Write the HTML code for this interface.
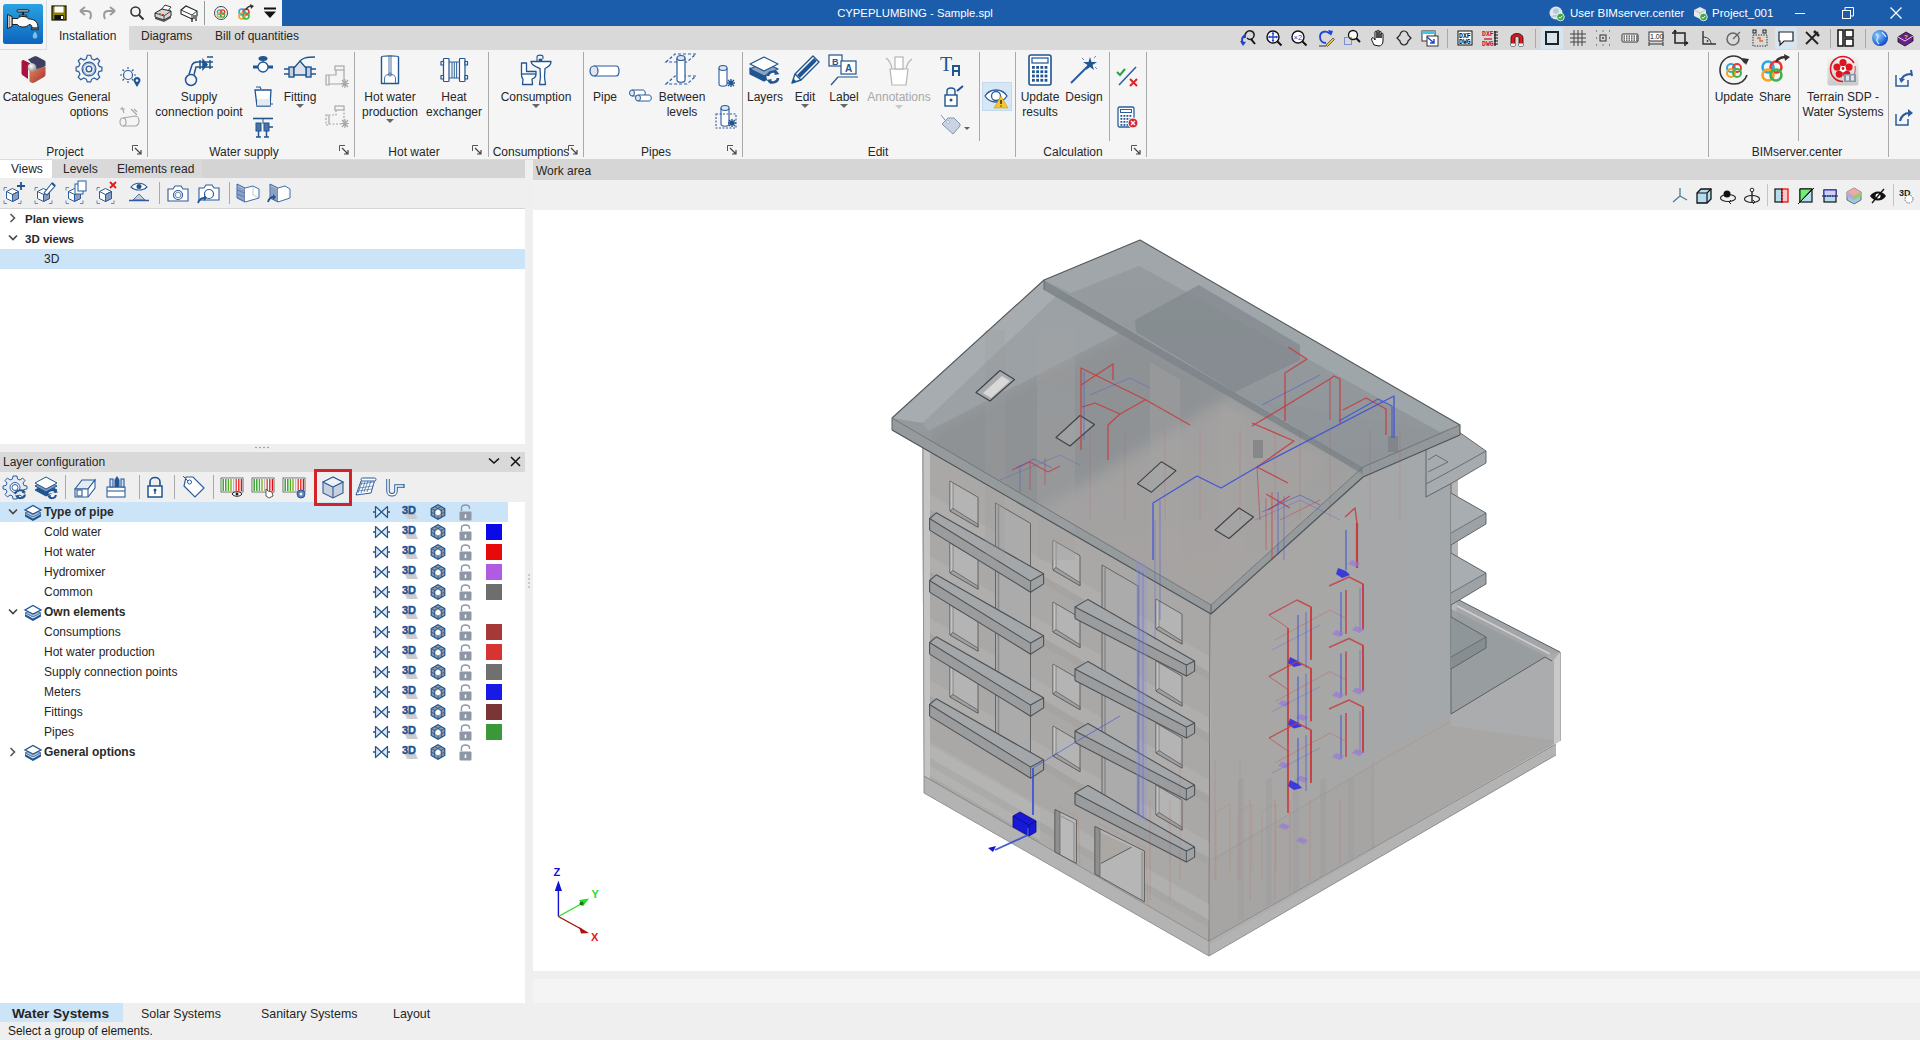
<!DOCTYPE html>
<html><head><meta charset="utf-8"><title>CYPEPLUMBING</title>
<style>
html,body{margin:0;padding:0;width:1920px;height:1040px;overflow:hidden;background:#ffffff;}
body{position:relative;font-family:"Liberation Sans", sans-serif;}
.t{position:absolute;white-space:nowrap;font-family:"Liberation Sans", sans-serif;}
.b{position:absolute;}
.s{position:absolute;overflow:visible;}
</style></head><body>
<div class="b" style="left:0px;top:0px;width:282px;height:26px;background:#f5f5f5;"></div>
<div class="b" style="left:282px;top:0px;width:1638px;height:26px;background:#1b5dab;"></div>
<div class="b" style="left:0px;top:0px;width:47px;height:50px;background:#f5f5f5;box-sizing:border-box;border-right:1px solid #dedede;border-bottom:1px solid #dedede;"></div>
<svg class="s" style="left:3px;top:4px;" width="40" height="40" viewBox="0 0 40 40"><defs><linearGradient id="ag" x1="0" y1="0" x2="0" y2="1"><stop offset="0" stop-color="#2aa2e2"/><stop offset="1" stop-color="#0d64be"/></linearGradient></defs>
<rect x="0" y="0" width="40" height="40" rx="2.5" fill="url(#ag)"/>
<rect x="14" y="5.8" width="12" height="2.2" rx="1.1" fill="#cfc9c6" stroke="#111" stroke-width="0.9"/>
<rect x="19.3" y="8" width="1.6" height="3" fill="#111"/>
<path d="M16.5 11 L23.5 11 L24 13 L16 13Z" fill="#8a8583" stroke="#111" stroke-width="0.6"/>
<path d="M9 14.5 L15 14.5 C16 12.5 18 12.5 20 12.5 C23 12.5 24.5 13.5 25.5 15 C31 15 35 17 35 24 L29 24 C29 21 27.5 20.5 26 20.5 C25 22 23 23 20 23 C17 23 15.5 22 14.5 20.5 L9 20.5 Z" fill="#fafafa" stroke="#111" stroke-width="0.9" stroke-linejoin="round"/>
<path d="M4.5 10.5 L9 12.5 L9 22.5 L4.5 24.5 Z" fill="#dedad8" stroke="#111" stroke-width="0.9"/>
<path d="M6.3 12 L6.3 23" stroke="#111" stroke-width="0.5"/>
<rect x="28.5" y="24" width="7" height="1.8" fill="#7a7573" stroke="#111" stroke-width="0.6"/>
<path d="M32 26.5 C30.5 29 29.3 30.5 29.3 32 C29.3 33.8 30.5 35 32 35 C33.5 35 34.7 33.8 34.7 32 C34.7 30.5 33.5 29 32 26.5Z" fill="#6cc4f0" stroke="#1a5a9a" stroke-width="0.6"/></svg>
<svg class="s" style="left:51px;top:5px;" width="16" height="16" viewBox="0 0 16 16"><rect x="1" y="1" width="14" height="14" fill="#8a8000" stroke="#111" stroke-width="1.2"/><rect x="3.5" y="1.5" width="9" height="6" fill="#fff"/><rect x="3.5" y="10" width="9" height="5" fill="#111"/><rect x="10" y="11" width="2" height="3" fill="#fff"/></svg>
<svg class="s" style="left:77px;top:5px;" width="16" height="16" viewBox="0 0 16 16"><path d="M3 6 L8 2 M3 6 L8 10 M3 6 L10 6 C14 6 15 10 13 14" fill="none" stroke="#9a9a9a" stroke-width="2"/></svg>
<svg class="s" style="left:102px;top:5px;" width="16" height="16" viewBox="0 0 16 16"><path d="M13 6 L8 2 M13 6 L8 10 M13 6 L6 6 C2 6 1 10 3 14" fill="none" stroke="#9a9a9a" stroke-width="2"/></svg>
<svg class="s" style="left:129px;top:5px;" width="16" height="16" viewBox="0 0 16 16"><circle cx="6.5" cy="6.5" r="4.5" fill="none" stroke="#333" stroke-width="1.6"/><path d="M10 10 L14.5 14.5" stroke="#333" stroke-width="2"/></svg>
<svg class="s" style="left:154px;top:4px;" width="18" height="18" viewBox="0 0 18 18"><path d="M7 6 L11 1 L17 3 L13 8Z" fill="#fff" stroke="#222" stroke-width="0.9"/><path d="M1 9 L8 5 L17 7 L17 12 L10 16 L1 13Z" fill="#d6d6d6" stroke="#222" stroke-width="1"/><path d="M1 9 L10 12 L17 7 M10 12 L10 16" fill="none" stroke="#222" stroke-width="0.8"/><path d="M1 13 L10 16 L17 12 L17 14 L10 18 L1 15Z" fill="#555"/><rect x="5" y="9" width="2" height="1.3" fill="#2c2"/><rect x="8" y="10" width="2" height="1.3" fill="#e22"/></svg>
<svg class="s" style="left:180px;top:4px;" width="18" height="18" viewBox="0 0 18 18"><path d="M1 6 L6 2 L17 7 L17 12 L12 15 L1 10Z" fill="#fff" stroke="#222" stroke-width="1.1"/><path d="M1 6 L12 11 L17 7 M12 11 L12 15" fill="none" stroke="#222" stroke-width="0.9"/><path d="M12 15 L12 18 M16 12 L16 17" stroke="#222" stroke-width="1.3"/><rect x="13" y="11" width="4" height="4" fill="#777"/><rect x="15" y="8" width="1.5" height="1" fill="#2c2"/></svg>
<div class="b" style="left:204px;top:1px;width:1px;height:24px;background:#9a9a9a;"></div>
<svg class="s" style="left:213px;top:5px;" width="16" height="16" viewBox="0 0 16 16"><circle cx="8" cy="8" r="6.5" fill="none" stroke="#444" stroke-width="1"/><circle cx="6.5" cy="7" r="2.2" fill="none" stroke="#2aa7e0" stroke-width="1.3"/><circle cx="9.5" cy="7" r="2.2" fill="none" stroke="#e33" stroke-width="1.3"/><circle cx="6.5" cy="10" r="2.2" fill="none" stroke="#f6a21c" stroke-width="1.3"/><circle cx="9.5" cy="10" r="2.2" fill="none" stroke="#3bb54a" stroke-width="1.3"/></svg>
<svg class="s" style="left:237px;top:4px;" width="18" height="17" viewBox="0 0 18 17"><circle cx="5" cy="8" r="3" fill="none" stroke="#2aa7e0" stroke-width="1.6"/><circle cx="9" cy="8" r="3" fill="none" stroke="#e33" stroke-width="1.6"/><circle cx="5" cy="12" r="3" fill="none" stroke="#f6a21c" stroke-width="1.6"/><circle cx="9" cy="12" r="3" fill="none" stroke="#3bb54a" stroke-width="1.6"/><path d="M9 6 C10 3 12 2 15 2" stroke="#333" stroke-width="1.5" fill="none"/><path d="M13 0 L17 2 L14 5Z" fill="#333"/></svg>
<svg class="s" style="left:263px;top:6px;" width="14" height="14" viewBox="0 0 14 14"><rect x="1" y="1.5" width="12" height="2" fill="#111"/><path d="M1 5.5 L13 5.5 L7 12Z" fill="#111"/></svg>
<div class="t" style="left:715px;width:400px;text-align:center;top:6.08px;font-size:11.3px;line-height:14px;font-weight:400;color:#ffffff;">CYPEPLUMBING - Sample.spl</div>
<svg class="s" style="left:1549px;top:5px;" width="16" height="16" viewBox="0 0 16 16"><circle cx="7" cy="8" r="6.5" fill="#dfe6ee"/><circle cx="7" cy="6" r="2.8" fill="#b9c7d6"/><path d="M2 12 C4 9 10 9 12 12" fill="#b9c7d6"/><circle cx="11.5" cy="12" r="3.8" fill="#3aa648" stroke="#fff" stroke-width="0.8"/><path d="M9.8 12 L11 13.3 L13.3 10.8" stroke="#fff" stroke-width="1" fill="none"/></svg>
<div class="t" style="left:1570px;top:6.02px;font-size:11.5px;line-height:14px;font-weight:400;color:#ffffff;">User BIMserver.center</div>
<svg class="s" style="left:1692px;top:5px;" width="16" height="16" viewBox="0 0 16 16"><path d="M2 5 L8 2 L14 5 L14 11 L8 14 L2 11Z" fill="#e8e8e8"/><path d="M2 5 L8 8 L14 5 M8 8 L8 14" stroke="#bbb" fill="none"/><circle cx="11.5" cy="12" r="3.8" fill="#3aa648" stroke="#fff" stroke-width="0.8"/><path d="M9.8 12 L11 13.3 L13.3 10.8" stroke="#fff" stroke-width="1" fill="none"/></svg>
<div class="t" style="left:1712px;top:6.02px;font-size:11.5px;line-height:14px;font-weight:400;color:#ffffff;">Project_001</div>
<div class="b" style="left:1795px;top:13px;width:10px;height:1px;background:#ffffff;"></div>
<svg class="s" style="left:1842px;top:7px;" width="12" height="12" viewBox="0 0 12 12"><rect x="0.5" y="3.5" width="8" height="8" fill="none" stroke="#fff"/><path d="M3 3.5 L3 0.5 L11.5 0.5 L11.5 9 L8.5 9" fill="none" stroke="#fff"/></svg>
<svg class="s" style="left:1890px;top:7px;" width="12" height="12" viewBox="0 0 12 12"><path d="M0.5 0.5 L11.5 11.5 M11.5 0.5 L0.5 11.5" stroke="#fff" stroke-width="1.3"/></svg>
<div class="b" style="left:47px;top:26px;width:82px;height:24px;background:#f5f5f5;"></div>
<div class="b" style="left:129px;top:26px;width:1791px;height:24px;background:#d9d9d9;"></div>
<div class="t" style="left:59px;top:29.34px;font-size:12px;line-height:15px;font-weight:400;color:#262626;">Installation</div>
<div class="t" style="left:141px;top:29.34px;font-size:12px;line-height:15px;font-weight:400;color:#262626;">Diagrams</div>
<div class="t" style="left:215px;top:29.34px;font-size:12px;line-height:15px;font-weight:400;color:#262626;">Bill of quantities</div>
<div class="b" style="left:0px;top:50px;width:1920px;height:109px;background:#f5f5f5;"></div>
<div class="b" style="left:0px;top:159px;width:1920px;height:1px;background:#dcdcdc;"></div>
<div class="b" style="left:147px;top:52px;width:1px;height:105px;background:#a9a9a9;"></div>
<div class="b" style="left:354px;top:52px;width:1px;height:105px;background:#a9a9a9;"></div>
<div class="b" style="left:488px;top:52px;width:1px;height:105px;background:#a9a9a9;"></div>
<div class="b" style="left:583px;top:52px;width:1px;height:105px;background:#a9a9a9;"></div>
<div class="b" style="left:742px;top:52px;width:1px;height:105px;background:#a9a9a9;"></div>
<div class="b" style="left:1015px;top:52px;width:1px;height:105px;background:#a9a9a9;"></div>
<div class="b" style="left:1146px;top:52px;width:1px;height:105px;background:#a9a9a9;"></div>
<div class="b" style="left:1708px;top:52px;width:1px;height:105px;background:#a9a9a9;"></div>
<div class="b" style="left:1888px;top:52px;width:1px;height:105px;background:#a9a9a9;"></div>
<div class="b" style="left:979px;top:52px;width:1px;height:89px;background:#a9a9a9;"></div>
<div class="b" style="left:1109px;top:52px;width:1px;height:89px;background:#a9a9a9;"></div>
<div class="b" style="left:1798px;top:52px;width:1px;height:89px;background:#a9a9a9;"></div>
<div class="t" style="left:-135px;width:400px;text-align:center;top:145.34px;font-size:12px;line-height:15px;font-weight:400;color:#262626;">Project</div>
<div class="t" style="left:44px;width:400px;text-align:center;top:145.34px;font-size:12px;line-height:15px;font-weight:400;color:#262626;">Water supply</div>
<div class="t" style="left:214px;width:400px;text-align:center;top:145.34px;font-size:12px;line-height:15px;font-weight:400;color:#262626;">Hot water</div>
<div class="t" style="left:331px;width:400px;text-align:center;top:145.34px;font-size:12px;line-height:15px;font-weight:400;color:#262626;">Consumptions</div>
<div class="t" style="left:456px;width:400px;text-align:center;top:145.34px;font-size:12px;line-height:15px;font-weight:400;color:#262626;">Pipes</div>
<div class="t" style="left:678px;width:400px;text-align:center;top:145.34px;font-size:12px;line-height:15px;font-weight:400;color:#262626;">Edit</div>
<div class="t" style="left:873px;width:400px;text-align:center;top:145.34px;font-size:12px;line-height:15px;font-weight:400;color:#262626;">Calculation</div>
<div class="t" style="left:1597px;width:400px;text-align:center;top:145.34px;font-size:12px;line-height:15px;font-weight:400;color:#262626;">BIMserver.center</div>
<svg class="s" style="left:132px;top:145px;" width="10" height="10" viewBox="0 0 10 10"><path d="M0.5 6 L0.5 0.5 L6 0.5" fill="none" stroke="#555" stroke-width="1"/><path d="M3 3 L9 9 M5 9 L9 9 L9 5" fill="none" stroke="#444" stroke-width="1.2"/></svg>
<svg class="s" style="left:339px;top:145px;" width="10" height="10" viewBox="0 0 10 10"><path d="M0.5 6 L0.5 0.5 L6 0.5" fill="none" stroke="#555" stroke-width="1"/><path d="M3 3 L9 9 M5 9 L9 9 L9 5" fill="none" stroke="#444" stroke-width="1.2"/></svg>
<svg class="s" style="left:472px;top:145px;" width="10" height="10" viewBox="0 0 10 10"><path d="M0.5 6 L0.5 0.5 L6 0.5" fill="none" stroke="#555" stroke-width="1"/><path d="M3 3 L9 9 M5 9 L9 9 L9 5" fill="none" stroke="#444" stroke-width="1.2"/></svg>
<svg class="s" style="left:568px;top:145px;" width="10" height="10" viewBox="0 0 10 10"><path d="M0.5 6 L0.5 0.5 L6 0.5" fill="none" stroke="#555" stroke-width="1"/><path d="M3 3 L9 9 M5 9 L9 9 L9 5" fill="none" stroke="#444" stroke-width="1.2"/></svg>
<svg class="s" style="left:727px;top:145px;" width="10" height="10" viewBox="0 0 10 10"><path d="M0.5 6 L0.5 0.5 L6 0.5" fill="none" stroke="#555" stroke-width="1"/><path d="M3 3 L9 9 M5 9 L9 9 L9 5" fill="none" stroke="#444" stroke-width="1.2"/></svg>
<svg class="s" style="left:1131px;top:145px;" width="10" height="10" viewBox="0 0 10 10"><path d="M0.5 6 L0.5 0.5 L6 0.5" fill="none" stroke="#555" stroke-width="1"/><path d="M3 3 L9 9 M5 9 L9 9 L9 5" fill="none" stroke="#444" stroke-width="1.2"/></svg>
<div class="t" style="left:-167px;width:400px;text-align:center;top:90.34px;font-size:12px;line-height:15px;font-weight:400;color:#262626;">Catalogues</div>
<div class="t" style="left:-111px;width:400px;text-align:center;top:90.34px;font-size:12px;line-height:15px;font-weight:400;color:#262626;">General</div>
<div class="t" style="left:-111px;width:400px;text-align:center;top:105.34px;font-size:12px;line-height:15px;font-weight:400;color:#262626;">options</div>
<div class="t" style="left:-1px;width:400px;text-align:center;top:90.34px;font-size:12px;line-height:15px;font-weight:400;color:#262626;">Supply</div>
<div class="t" style="left:-1px;width:400px;text-align:center;top:105.34px;font-size:12px;line-height:15px;font-weight:400;color:#262626;">connection point</div>
<div class="t" style="left:100px;width:400px;text-align:center;top:90.34px;font-size:12px;line-height:15px;font-weight:400;color:#262626;">Fitting</div>
<svg class="s" style="left:296px;top:104px;" width="8" height="4" viewBox="0 0 8 4"><path d="M0 0 L8 0 L4 4Z" fill="#666"/></svg>
<div class="t" style="left:190px;width:400px;text-align:center;top:90.34px;font-size:12px;line-height:15px;font-weight:400;color:#262626;">Hot water</div>
<div class="t" style="left:190px;width:400px;text-align:center;top:105.34px;font-size:12px;line-height:15px;font-weight:400;color:#262626;">production</div>
<svg class="s" style="left:386px;top:119px;" width="8" height="4" viewBox="0 0 8 4"><path d="M0 0 L8 0 L4 4Z" fill="#666"/></svg>
<div class="t" style="left:254px;width:400px;text-align:center;top:90.34px;font-size:12px;line-height:15px;font-weight:400;color:#262626;">Heat</div>
<div class="t" style="left:254px;width:400px;text-align:center;top:105.34px;font-size:12px;line-height:15px;font-weight:400;color:#262626;">exchanger</div>
<div class="t" style="left:336px;width:400px;text-align:center;top:90.34px;font-size:12px;line-height:15px;font-weight:400;color:#262626;">Consumption</div>
<svg class="s" style="left:532px;top:104px;" width="8" height="4" viewBox="0 0 8 4"><path d="M0 0 L8 0 L4 4Z" fill="#666"/></svg>
<div class="t" style="left:405px;width:400px;text-align:center;top:90.34px;font-size:12px;line-height:15px;font-weight:400;color:#262626;">Pipe</div>
<div class="t" style="left:482px;width:400px;text-align:center;top:90.34px;font-size:12px;line-height:15px;font-weight:400;color:#262626;">Between</div>
<div class="t" style="left:482px;width:400px;text-align:center;top:105.34px;font-size:12px;line-height:15px;font-weight:400;color:#262626;">levels</div>
<div class="t" style="left:565px;width:400px;text-align:center;top:90.34px;font-size:12px;line-height:15px;font-weight:400;color:#262626;">Layers</div>
<div class="t" style="left:605px;width:400px;text-align:center;top:90.34px;font-size:12px;line-height:15px;font-weight:400;color:#262626;">Edit</div>
<svg class="s" style="left:801px;top:104px;" width="8" height="4" viewBox="0 0 8 4"><path d="M0 0 L8 0 L4 4Z" fill="#666"/></svg>
<div class="t" style="left:644px;width:400px;text-align:center;top:90.34px;font-size:12px;line-height:15px;font-weight:400;color:#262626;">Label</div>
<svg class="s" style="left:840px;top:104px;" width="8" height="4" viewBox="0 0 8 4"><path d="M0 0 L8 0 L4 4Z" fill="#666"/></svg>
<div class="t" style="left:699px;width:400px;text-align:center;top:90.34px;font-size:12px;line-height:15px;font-weight:400;color:#a8a8a8;">Annotations</div>
<svg class="s" style="left:895px;top:105px;" width="8" height="4" viewBox="0 0 8 4"><path d="M0 0 L8 0 L4 4Z" fill="#c8c8c8"/></svg>
<div class="t" style="left:840px;width:400px;text-align:center;top:90.34px;font-size:12px;line-height:15px;font-weight:400;color:#262626;">Update</div>
<div class="t" style="left:840px;width:400px;text-align:center;top:105.34px;font-size:12px;line-height:15px;font-weight:400;color:#262626;">results</div>
<div class="t" style="left:884px;width:400px;text-align:center;top:90.34px;font-size:12px;line-height:15px;font-weight:400;color:#262626;">Design</div>
<div class="t" style="left:1534px;width:400px;text-align:center;top:90.34px;font-size:12px;line-height:15px;font-weight:400;color:#262626;">Update</div>
<div class="t" style="left:1575px;width:400px;text-align:center;top:90.34px;font-size:12px;line-height:15px;font-weight:400;color:#262626;">Share</div>
<div class="t" style="left:1643px;width:400px;text-align:center;top:90.34px;font-size:12px;line-height:15px;font-weight:400;color:#262626;">Terrain SDP -</div>
<div class="t" style="left:1643px;width:400px;text-align:center;top:105.34px;font-size:12px;line-height:15px;font-weight:400;color:#262626;">Water Systems</div>
<svg class="s" style="left:17.0px;top:52.0px;" width="32" height="32" viewBox="0 0 32 32"><defs><radialGradient id="sph" cx="0.4" cy="0.35" r="0.6"><stop offset="0" stop-color="#ffffff"/><stop offset="1" stop-color="#9a9a9a"/></radialGradient><linearGradient id="org" x1="0" y1="0" x2="1" y2="1"><stop offset="0" stop-color="#e88a50"/><stop offset="1" stop-color="#9c2f3a"/></linearGradient></defs>
<path d="M6.5 8 L13.5 11.5 L11 13.5 L11 27 L6 23.5 C5 23 4.5 22 4.5 21 L4.5 10 C4.5 8.5 5.5 8 6.5 8Z" fill="#a8123c"/><path d="M11 7.5 L17 4.5 C18 4 19 4 20 4.5 L27.5 8.5 C28 8.8 28.5 9.5 28.5 10.5 L28.5 14 L20.5 18 Z" fill="#3c3e62"/><path d="M12.5 19 L28.5 14.5 L28.5 22.5 C28.5 23.5 28 24.3 27 25 L17.5 30.5 C16.5 31 15 31 14 30.5 L12.5 29.5Z" fill="url(#org)"/><circle cx="15" cy="15.5" r="4.3" fill="url(#sph)"/></svg>
<svg class="s" style="left:73.0px;top:53.0px;" width="32" height="32" viewBox="0 0 32 32"><g transform="translate(16,16) scale(0.86) translate(-16,-16)"><g fill="none" stroke="#2b5c9e" stroke-width="1.4"><path d="M14 2 L18 2 L19 6 L22 7.5 L25.5 5.5 L28.5 8.5 L26.5 12 L28 15 L31 16 L31 20 L27.5 21 L26.5 24 L28.5 27.5 L25.5 30.5 L22 28.5 L19 30 L18 33 L14 33 L13 30 L10 28.5 L6.5 30.5 L3.5 27.5 L5.5 24 L4 21 L1 20 L1 16 L4 15 L5.5 12 L3.5 8.5 L6.5 5.5 L10 7.5 L13 6 Z" transform="translate(0,-2)"/><circle cx="16" cy="16" r="8"/><circle cx="16" cy="16" r="6.5" stroke-width="0.6"/><circle cx="16" cy="16" r="3.3" stroke-width="1.6"/></g></g></svg>
<svg class="s" style="left:119px;top:65px;" width="24" height="24" viewBox="0 0 24 24"><g stroke="#2b5c9e" fill="none" stroke-width="1.2"><circle cx="9" cy="10" r="4.5"/><path d="M9 2 L9 4 M9 16 L9 18 M1 10 L3 10 M15 10 L17 10 M3.5 4.5 L5 6 M13 14 L14.5 15.5 M3.5 15.5 L5 14 M13 6 L14.5 4.5"/></g><path d="M18 12 C15 12 14 15 15 17 L18 22 L21 17 C22 15 21 12 18 12Z" fill="#1f5591"/><circle cx="18" cy="15.5" r="1.3" fill="#fff"/></svg>
<svg class="s" style="left:117px;top:105px;" width="24" height="24" viewBox="0 0 24 24"><g stroke="#a8a8a8" fill="none" stroke-width="1.2"><path d="M3 4 L8 4 M5 2 L7 8"/><ellipse cx="6" cy="17" rx="3" ry="4"/><path d="M6 13 L18 11 C21 11 22 14 22 16 C22 19 20 21 18 21 L6 21"/><path d="M14 4 L20 10 M17 4 L20 7"/></g></svg>
<svg class="s" style="left:183.0px;top:54.0px;" width="32" height="32" viewBox="0 0 32 32"><g fill="none" stroke="#1f5591" stroke-width="1.5"><circle cx="8" cy="26" r="5.5"/><path d="M6 20.5 L9 11 C10 9 11 8 14 8 L30 8 M11 20.8 L13 13 L30 13"/><path d="M17 6 L17 15 M27 6 L27 15"/><path d="M20 6 L24 10.5 L20 15Z" fill="#1f5591"/><path d="M24 3 L30 3"/></g></svg>
<svg class="s" style="left:253px;top:55px;" width="20" height="20" viewBox="0 0 20 20"><ellipse cx="10" cy="3.5" rx="4.5" ry="2.5" fill="#1f5591"/><path d="M10 6 L10 8" stroke="#1f5591"/><circle cx="10" cy="12" r="5" fill="#fff" stroke="#1f5591" stroke-width="1.3"/><rect x="0" y="10.5" width="5" height="3" fill="#1f5591"/><rect x="15" y="10.5" width="5" height="3" fill="#1f5591"/></svg>
<svg class="s" style="left:253px;top:86px;" width="20" height="22" viewBox="0 0 20 22"><path d="M3 1 L7 1 L8 3" stroke="#1f5591" fill="none" stroke-width="1.2"/><path d="M2 4 L18 4 L17 20 L4 20 Z" fill="#fff" stroke="#1f5591" stroke-width="1.3"/><rect x="4" y="13" width="13" height="6.5" fill="#e6e9ef"/><path d="M17 18 L20 18" stroke="#1f5591"/></svg>
<svg class="s" style="left:253px;top:117px;" width="20" height="22" viewBox="0 0 20 22"><path d="M0 1.5 L20 1.5" stroke="#1f5591" stroke-width="1.6"/><path d="M10 1.5 L10 7" stroke="#1f5591"/><rect x="3" y="6" width="5" height="8" fill="#4a73a8" stroke="#1f5591"/><rect x="11" y="6" width="5" height="8" fill="#4a73a8" stroke="#1f5591"/><path d="M5.5 14 L5.5 20 M13.5 14 L13.5 20 M3 20 L8 20 M11 20 L16 20 M16 10 L20 10" stroke="#1f5591" stroke-width="1.5"/></svg>
<svg class="s" style="left:284.0px;top:51.0px;" width="32" height="32" viewBox="0 0 32 32"><g stroke="#1f5591" stroke-width="1.4" fill="none"><path d="M0 18 L32 18 M0 23 L32 23"/><rect x="5" y="16" width="5" height="10" fill="#c5cfdd"/><rect x="22" y="16" width="5" height="10" fill="#c5cfdd"/><path d="M10 17 L16 10 L22 17 L22 24 L10 24Z" fill="#dde2ea"/><path d="M16 10 C19 7 22 6 31 6"/></g></svg>
<svg class="s" style="left:323px;top:64px;" width="26" height="26" viewBox="0 0 26 26"><g stroke="#a8a8a8" fill="none" stroke-width="1.2"><rect x="12" y="2" width="9" height="4"/><path d="M13 6 L13 11 L6 11 L6 20 L21 20 L21 6 M3 11 L6 11 L6 21 L3 21Z"/><path d="M19 16 L25 23 M25 16 L19 23 M22 15 L22 24 M18 19.5 L26 19.5"/></g></svg>
<svg class="s" style="left:323px;top:104px;" width="26" height="26" viewBox="0 0 26 26"><g stroke="#a8a8a8" fill="none" stroke-width="1.2"><rect x="12" y="2" width="9" height="4"/><path d="M13 6 L13 11 L6 11 L6 20 L21 20 L21 6 M3 11 L6 11 L6 21 L3 21Z" stroke-dasharray="2 1.5"/><path d="M19 16 L25 23 M25 16 L19 23 M22 15 L22 24 M18 19.5 L26 19.5"/></g></svg>
<svg class="s" style="left:374.0px;top:54.0px;" width="32" height="32" viewBox="0 0 32 32"><g stroke="#1f5591" fill="none" stroke-linejoin="round"><path d="M7.5 3 C7.5 1.5 24.5 1.5 24.5 3 L24.5 29.5 L7.5 29.5 Z" fill="#fff" stroke-width="1.4"/><path d="M15 2 L15 19 M17 2 L17 19" stroke-width="0.8"/><path d="M10.5 29 L10.5 24 C10.5 19 21.5 19 21.5 24 L21.5 29" stroke-width="0.8"/><circle cx="16" cy="20.5" r="1.6" stroke-width="0.8"/></g></svg>
<svg class="s" style="left:438.0px;top:54.0px;" width="32" height="32" viewBox="0 0 32 32"><g stroke="#1f5591" fill="#fff" stroke-width="1.2" stroke-linejoin="round"><rect x="5.5" y="4.5" width="5.5" height="23" rx="0.8"/><rect x="21.5" y="4.5" width="5.5" height="23" rx="0.8"/><rect x="3" y="7.5" width="2.5" height="3.5"/><rect x="27" y="7.5" width="2.5" height="3.5"/><rect x="3" y="21.5" width="2.5" height="3.5"/><rect x="27" y="21.5" width="2.5" height="3.5"/><path d="M11 8 L21.5 8 M11 24 L21.5 24 M14 8 L14 24 M16.3 8 L16.3 24 M18.6 8 L18.6 24" fill="none" stroke-width="0.9"/></g></svg>
<svg class="s" style="left:520.0px;top:54.0px;" width="32" height="32" viewBox="0 0 32 32"><g stroke="#1f5591" fill="#fff" stroke-width="1.3" stroke-linejoin="round"><path d="M1.5 9 L6.5 9 L6.5 17.5 L16 17.5 L16 20 C16 23 13.5 24.5 12 25 L12.5 30.5 L2.5 30.5 L3 25 C1.5 24 1.5 22 1.5 19.5 Z"/><path d="M1.5 20 L16 20" fill="none"/><path d="M11 7.5 L31 7.5 C31 11 28.5 13 25 14.5 L24.5 23 L25.5 30.5 L19.5 30.5 L20.5 23 L20 14.5 C16.5 13 11 11 11 7.5Z"/><path d="M17 7 L17 3 C17 0.5 23 0.5 23 3 L23 5" fill="none" stroke-width="1.1"/><path d="M19 7 L19 5 L22 5 L22 7" fill="#1f5591" stroke-width="0.6"/></g></svg>
<svg class="s" style="left:589.0px;top:54.0px;" width="32" height="32" viewBox="0 0 32 32"><g stroke="#2b5c9e" stroke-width="1.2"><path d="M5 12 L27 12 C31 12 31 22 27 22 L5 22" fill="#fff"/><ellipse cx="5" cy="17" rx="4" ry="5" fill="#dfe4ee"/></g></svg>
<svg class="s" style="left:629px;top:88px;" width="24" height="16" viewBox="0 0 24 16"><g stroke="#2b5c9e" stroke-width="1" fill="#fff"><path d="M3 2 L14 2 C17 2 17 8 14 8 L3 8"/><ellipse cx="3" cy="5" rx="2.5" ry="3" fill="#dfe4ee"/><path d="M9 7 L20 7 C23 7 23 13 20 13 L9 13"/><ellipse cx="9" cy="10" rx="2.5" ry="3" fill="#dfe4ee"/></g></svg>
<svg class="s" style="left:665.0px;top:53.0px;" width="34" height="34" viewBox="0 0 34 34"><g stroke="#2b5c9e" stroke-width="1.2" fill="none"><path d="M1 9 L10 1 L31 1 L22 9Z" stroke-dasharray="3 2"/><path d="M1 31 L10 23 L31 23 L22 31Z" stroke-dasharray="3 2"/><path d="M12 5 L12 27 C12 30 20 30 20 27 L20 5" fill="#fff"/><ellipse cx="16" cy="5" rx="4" ry="2.5" fill="#dfe4ee"/></g></svg>
<svg class="s" style="left:715px;top:64px;" width="20" height="26" viewBox="0 0 20 26"><g stroke="#2b5c9e" stroke-width="1.1"><path d="M4 4 L4 20 C4 23 12 23 12 20 L12 4" fill="#fff"/><ellipse cx="8" cy="4" rx="4" ry="2.5" fill="#dfe4ee"/></g><path d="M13 16 L19 22 M19 16 L13 22 M16 15 L16 23 M12 19 L20 19" stroke="#1f5591" stroke-width="1.4"/></svg>
<svg class="s" style="left:715px;top:104px;" width="22" height="26" viewBox="0 0 22 26"><g stroke="#2b5c9e" stroke-width="1.1"><path d="M6 4 L6 20 C6 23 14 23 14 20 L14 4" fill="#fff"/><ellipse cx="10" cy="4" rx="4" ry="2.5" fill="#dfe4ee"/><rect x="1" y="10" width="20" height="14" fill="none" stroke-dasharray="2 1.5"/></g><path d="M14 16 L20 22 M20 16 L14 22 M17 15 L17 23 M13 19 L21 19" stroke="#1f5591" stroke-width="1.4"/></svg>
<svg class="s" style="left:749.0px;top:54.0px;" width="32" height="32" viewBox="0 0 32 32"><g stroke="#1f5591" stroke-width="1.2" stroke-linejoin="round"><path d="M1 20 L15 27 L24 22 L24 17 L15 21 L1 14Z" fill="#1f5591"/><path d="M1 15 L15 22 L29 15 L15 8Z" fill="#8fa3c4"/><path d="M1 10 L15 17 L29 10 L15 3Z" fill="#fff"/></g><circle cx="24" cy="23" r="6.5" fill="#f5f5f5"/><path d="M19 22 C19 18 25 16 28 19 M29 24 C29 28 23 30 20 27" stroke="#1f5591" stroke-width="2.6" fill="none"/><path d="M26 16 L30.5 20 L25.5 21Z M22 30 L17.5 26 L22.5 25Z" fill="#1f5591"/></svg>
<svg class="s" style="left:789.0px;top:54.0px;" width="32" height="32" viewBox="0 0 32 32"><g stroke="#1f5591" stroke-width="1.4" stroke-linejoin="round"><path d="M3 29 L6 20 L24 2 L30 8 L12 26 Z" fill="#fff"/><path d="M9 21 L25 5 L27 7 L11 23Z" fill="#1f5591"/><path d="M6 20 L12 26"/></g><path d="M3 29 L4.5 24.5 L7.5 27.5Z" fill="#1f5591"/></svg>
<svg class="s" style="left:828.0px;top:54.0px;" width="32" height="32" viewBox="0 0 32 32"><g stroke="#1f5591" stroke-width="1.2" fill="#fff"><rect x="1" y="1" width="13" height="11"/><rect x="13" y="7" width="15" height="13"/><path d="M10 23 L30 23 M10 23 L3 31" fill="none"/></g><text x="4" y="10.5" font-family="Liberation Sans" font-weight="700" font-size="9" fill="#1f5591">B</text><text x="17" y="18" font-family="Liberation Sans" font-weight="700" font-size="10" fill="#1f5591">A</text></svg>
<svg class="s" style="left:883.0px;top:54.0px;" width="32" height="32" viewBox="0 0 32 32"><g stroke="#b5b5b5" stroke-width="1.2" fill="#fff"><path d="M7 15 L25 15 L23 31 L9 31Z"/><rect x="12" y="3" width="8" height="12"/><path d="M3 4 C6 6 8 10 9 15 M29 5 C26 7 24 10 23 15" fill="none"/></g></svg>
<svg class="s" style="left:940px;top:54px;" width="22" height="24" viewBox="0 0 22 24"><text x="0" y="17" font-family="Liberation Serif" font-size="20" fill="#1f5591">T</text><path d="M12 12 L20 12 M13 12 L13 22 M19 12 L19 22 M13 17 L19 17" stroke="#1f5591" stroke-width="2"/></svg>
<svg class="s" style="left:942px;top:85px;" width="22" height="24" viewBox="0 0 22 24"><rect x="3" y="10" width="12" height="11" fill="#fff" stroke="#1f5591" stroke-width="1.4"/><path d="M5 10 L5 6 C5 2 13 2 13 6 L13 10" fill="none" stroke="#1f5591" stroke-width="1.4"/><circle cx="9" cy="15" r="1.5" fill="#1f5591"/><path d="M15 6 L21 1" stroke="#1f5591" stroke-width="2"/></svg>
<svg class="s" style="left:940px;top:114px;" width="32" height="24" viewBox="0 0 32 24"><path d="M1 1 L5 6" stroke="#7d94b5" stroke-width="1"/><path d="M2 10 L8 4 L14 4 L20 10 L20 12 L13 20 Z" fill="#c9d3e2" stroke="#7d94b5" stroke-width="1"/><circle cx="8" cy="8" r="1.5" fill="#fff" stroke="#7d94b5" stroke-width="0.6"/><path d="M24 13 L30 13 L27 16Z" fill="#666"/></svg>
<div class="b" style="left:982px;top:82px;width:30px;height:29px;background:#d5e6f5;box-sizing:border-box;border:1px solid #c2d9ee;"></div>
<svg class="s" style="left:983px;top:84px;" width="28" height="26" viewBox="0 0 28 26"><path d="M2 12 C7 4 19 4 24 12 C19 20 7 20 2 12Z" fill="#fff" stroke="#2b5c9e" stroke-width="1.3"/><circle cx="13" cy="12" r="4.5" fill="none" stroke="#2b5c9e" stroke-width="1.3"/><path d="M18 12 L25 24 L11 24Z" fill="#f7c52b" stroke="#caa000" stroke-width="0.6"/><path d="M18 16 L18 20 M18 21.5 L18 22.5" stroke="#222" stroke-width="1.4"/></svg>
<svg class="s" style="left:1024.0px;top:54.0px;" width="32" height="32" viewBox="0 0 32 32"><rect x="5" y="1" width="22" height="30" rx="2" fill="#fff" stroke="#1f5591" stroke-width="1.6"/><rect x="8" y="4" width="16" height="5" fill="#fff" stroke="#1f5591" stroke-width="1.2"/><rect x="8.0" y="12.0" width="2.8" height="2.8" fill="#1f5591"/><rect x="8.0" y="16.3" width="2.8" height="2.8" fill="#1f5591"/><rect x="8.0" y="20.6" width="2.8" height="2.8" fill="#1f5591"/><rect x="8.0" y="24.9" width="2.8" height="2.8" fill="#1f5591"/><rect x="12.2" y="12.0" width="2.8" height="2.8" fill="#1f5591"/><rect x="12.2" y="16.3" width="2.8" height="2.8" fill="#1f5591"/><rect x="12.2" y="20.6" width="2.8" height="2.8" fill="#1f5591"/><rect x="12.2" y="24.9" width="2.8" height="2.8" fill="#1f5591"/><rect x="16.4" y="12.0" width="2.8" height="2.8" fill="#1f5591"/><rect x="16.4" y="16.3" width="2.8" height="2.8" fill="#1f5591"/><rect x="16.4" y="20.6" width="2.8" height="2.8" fill="#1f5591"/><rect x="16.4" y="24.9" width="2.8" height="2.8" fill="#1f5591"/><rect x="20.6" y="12.0" width="2.8" height="2.8" fill="#1f5591"/><rect x="20.6" y="16.3" width="2.8" height="2.8" fill="#1f5591"/><rect x="20.6" y="20.6" width="2.8" height="2.8" fill="#1f5591"/><rect x="20.6" y="24.9" width="2.8" height="2.8" fill="#1f5591"/></svg>
<svg class="s" style="left:1068.0px;top:54.0px;" width="32" height="32" viewBox="0 0 32 32"><path d="M3 29 L20 12" stroke="#2b5c9e" stroke-width="2"/><path d="M22 3 L23.5 8 L29 8 L24.5 11 L26 16 L22 13 L18 16 L19.5 11 L15 8 L20.5 8Z" fill="#1f5591"/><path d="M14 4 L16 6 M28 2 L26 4 M29 15 L27 13" stroke="#6a8cc0"/></svg>
<svg class="s" style="left:1116px;top:64px;" width="24" height="24" viewBox="0 0 24 24"><path d="M1 8 L4 11 L9 5" stroke="#2ea043" stroke-width="2" fill="none"/><path d="M3 21 L20 3" stroke="#2b5c9e" stroke-width="1.5"/><path d="M14 15 L21 22 M21 15 L14 22" stroke="#d9262c" stroke-width="2"/></svg>
<svg class="s" style="left:1117px;top:106px;" width="24" height="24" viewBox="0 0 24 24"><rect x="1" y="1" width="16" height="20" rx="1.5" fill="#fff" stroke="#2b5c9e" stroke-width="1.3"/><rect x="3.5" y="3.5" width="11" height="3" fill="none" stroke="#2b5c9e"/><rect x="3.5" y="9" width="1.8" height="1.8" fill="#1f5591"/><rect x="3.5" y="12" width="1.8" height="1.8" fill="#1f5591"/><rect x="3.5" y="15" width="1.8" height="1.8" fill="#1f5591"/><rect x="3.5" y="18" width="1.8" height="1.8" fill="#1f5591"/><rect x="6.5" y="9" width="1.8" height="1.8" fill="#1f5591"/><rect x="6.5" y="12" width="1.8" height="1.8" fill="#1f5591"/><rect x="6.5" y="15" width="1.8" height="1.8" fill="#1f5591"/><rect x="6.5" y="18" width="1.8" height="1.8" fill="#1f5591"/><rect x="9.5" y="9" width="1.8" height="1.8" fill="#1f5591"/><rect x="9.5" y="12" width="1.8" height="1.8" fill="#1f5591"/><rect x="9.5" y="15" width="1.8" height="1.8" fill="#1f5591"/><rect x="9.5" y="18" width="1.8" height="1.8" fill="#1f5591"/><rect x="12.5" y="9" width="1.8" height="1.8" fill="#1f5591"/><rect x="12.5" y="12" width="1.8" height="1.8" fill="#1f5591"/><rect x="12.5" y="15" width="1.8" height="1.8" fill="#1f5591"/><rect x="12.5" y="18" width="1.8" height="1.8" fill="#1f5591"/><circle cx="16" cy="17" r="5" fill="#d9262c" stroke="#fff"/><path d="M14 15 L18 19 M18 15 L14 19" stroke="#fff" stroke-width="1.3"/></svg>
<svg class="s" style="left:1718.0px;top:54.0px;" width="32" height="32" viewBox="0 0 32 32"><path d="M27 9 C24 4 20 2 16 2 C8 2 2 8 2 16 C2 24 8 30 16 30 C22 30 27 27 29 21" fill="none" stroke="#333" stroke-width="1.6"/><path d="M24 4 L31 5 L28 11Z" fill="#333"/><circle cx="13" cy="14" r="4" fill="none" stroke="#2aa7e0" stroke-width="2"/><circle cx="19" cy="14" r="4" fill="none" stroke="#e33" stroke-width="2"/><circle cx="13" cy="19" r="4" fill="none" stroke="#f6a21c" stroke-width="2"/><circle cx="19" cy="19" r="4" fill="none" stroke="#3bb54a" stroke-width="2"/></svg>
<svg class="s" style="left:1759.0px;top:54.0px;" width="32" height="32" viewBox="0 0 32 32"><circle cx="9" cy="13" r="5.5" fill="none" stroke="#2aa7e0" stroke-width="2.6"/><circle cx="17" cy="13" r="5.5" fill="none" stroke="#e33" stroke-width="2.6"/><circle cx="9" cy="21" r="5.5" fill="none" stroke="#f6a21c" stroke-width="2.6"/><circle cx="17" cy="21" r="5.5" fill="none" stroke="#3bb54a" stroke-width="2.6"/><path d="M17 8 C19 4 23 3 27 3" stroke="#333" stroke-width="2.5" fill="none"/><path d="M25 0 L31 3 L26 7Z" fill="#333"/></svg>
<svg class="s" style="left:1827.0px;top:54.0px;" width="32" height="32" viewBox="0 0 32 32"><defs><linearGradient id="tg" x1="0" y1="0" x2="0" y2="1"><stop offset="0" stop-color="#f6f6f6"/><stop offset="1" stop-color="#c9c9c9"/></linearGradient></defs><rect x="0.5" y="0.5" width="31" height="31" rx="2" fill="url(#tg)"/><path d="M27 9 C24 4 19 2.5 16 2.5 C9 2.5 3.5 8 3.5 15 C3.5 22 9 27.5 16 27.5" fill="none" stroke="#e0141e" stroke-width="1.6"/><path d="M28 12 C29 18 27 24 22 26" fill="none" stroke="#e0141e" stroke-width="0.8"/><circle cx="16.0" cy="8.7" r="3.6" fill="#e0141e"/><circle cx="22.0" cy="13.1" r="3.6" fill="#e0141e"/><circle cx="19.7" cy="20.1" r="3.6" fill="#e0141e"/><circle cx="12.3" cy="20.1" r="3.6" fill="#e0141e"/><circle cx="10.0" cy="13.1" r="3.6" fill="#e0141e"/><circle cx="16" cy="15" r="3" fill="#fff"/><circle cx="16" cy="14.5" r="1.4" fill="#e0141e"/><rect x="17" y="20" width="12" height="8" fill="#8a96a6"/><rect x="19" y="21.5" width="3" height="5" fill="#dfe4ea"/><rect x="24" y="21.5" width="3" height="5" fill="#dfe4ea"/></svg>
<svg class="s" style="left:1894px;top:68px;" width="20" height="20" viewBox="0 0 20 20"><path d="M2 7 L2 18 L14 18 L14 12" fill="none" stroke="#2b5c9e" stroke-width="1.5"/><path d="M7 13 C8 8 12 6 17 6" stroke="#2b5c9e" stroke-width="2.2" fill="none"/><path d="M5 10 L7 15 L11 11Z" fill="#2b5c9e"/><path d="M17 2 L18 8" stroke="#2b5c9e" stroke-width="2"/></svg>
<svg class="s" style="left:1894px;top:107px;" width="20" height="20" viewBox="0 0 20 20"><path d="M2 7 L2 18 L14 18 L14 12" fill="none" stroke="#2b5c9e" stroke-width="1.5"/><path d="M6 14 C7 9 11 6 15 6" stroke="#2b5c9e" stroke-width="2.2" fill="none"/><path d="M14 2 L19 6 L14 10Z" fill="#2b5c9e"/></svg>
<svg class="s" style="left:1239.0px;top:29.0px;" width="18" height="18" viewBox="0 0 18 18"><path d="M6 9 C5 4 9 1 12 2 C16 3 16 8 13 10 C11 11 9 10 8 9" fill="none" stroke="#1b1b1b" stroke-width="1.5"/><path d="M12 10 L16 15" stroke="#111" stroke-width="2"/><path d="M7 6 C3 7 2 11 4 15" stroke="#1f44d8" stroke-width="2" fill="none"/><path d="M1 12 L4 17 L7 13Z" fill="#1f44d8"/></svg>
<svg class="s" style="left:1265.0px;top:29.0px;" width="18" height="18" viewBox="0 0 18 18"><circle cx="8" cy="8" r="6" fill="#fff" stroke="#111" stroke-width="1.4"/><path d="M12.5 12.5 L16.5 16.5" stroke="#111" stroke-width="2"/><path d="M8 3.5 L8 12.5 M3.5 8 L12.5 8" stroke="#1f44d8" stroke-width="1.3"/><path d="M6.5 5 L8 3 L9.5 5Z M6.5 11 L8 13 L9.5 11Z M5 6.5 L3 8 L5 9.5Z M11 6.5 L13 8 L11 9.5Z" fill="#1f44d8"/></svg>
<svg class="s" style="left:1290.0px;top:29.0px;" width="18" height="18" viewBox="0 0 18 18"><circle cx="8" cy="8" r="6" fill="#fff" stroke="#111" stroke-width="1.4"/><path d="M12.5 12.5 L16.5 16.5" stroke="#111" stroke-width="2"/><text x="3.5" y="11" font-family="Liberation Sans" font-size="7.5" fill="#1f44d8">×2</text></svg>
<svg class="s" style="left:1317.0px;top:29.0px;" width="18" height="18" viewBox="0 0 18 18"><path d="M13 5 C10 1 3 2 3 8 C3 12 6 14 9 14" stroke="#1f44d8" stroke-width="1.8" fill="none"/><path d="M11 1 L16 2 L14 7Z" fill="#1f44d8"/><path d="M9 16 L16 9 L17.5 10.5 L10.5 17.5Z" fill="#f2c230" stroke="#333" stroke-width="0.7"/><path d="M2 17 L9 17" stroke="#333"/></svg>
<svg class="s" style="left:1343.0px;top:29.0px;" width="18" height="18" viewBox="0 0 18 18"><circle cx="10" cy="6" r="4.5" fill="#fff" stroke="#111" stroke-width="1.3"/><path d="M13 9 L17 13" stroke="#111" stroke-width="2"/><rect x="1.5" y="8.5" width="7" height="7" fill="none" stroke="#1f44d8" stroke-dasharray="1 1"/></svg>
<svg class="s" style="left:1369.0px;top:29.0px;" width="18" height="18" viewBox="0 0 18 18"><path d="M5 16 C3 12 2 10 3 9 C4 8 5 9 6 11 L6 3 C6 2 8 2 8 3 L8 9 L8 2 C8 1 10 1 10 2 L10 9 L10 3 C10 2 12 2 12 3 L12 9 L12 5 C12 4 14 4 14 5 L14 12 C14 15 12 17 10 17Z" fill="#fff" stroke="#111" stroke-width="1"/></svg>
<svg class="s" style="left:1395.0px;top:29.0px;" width="18" height="18" viewBox="0 0 18 18"><path d="M9 2 C12 2 13 5 13 6 L16 9 L13 12 C13 14 11 16 9 16 C7 16 5 14 5 12 L2 9 L5 6 C5 4 7 2 9 2Z" fill="none" stroke="#222" stroke-width="1.2"/></svg>
<svg class="s" style="left:1421.0px;top:29.0px;" width="18" height="18" viewBox="0 0 18 18"><rect x="1" y="2" width="13" height="10" fill="#fff" stroke="#333"/><rect x="1" y="2" width="13" height="3" fill="#3cc6e8"/><rect x="6" y="7" width="11" height="10" fill="#fff" stroke="#333"/><path d="M6 8 L13 14 M13 10 L13 14 L9 14" stroke="#1f44d8" stroke-width="1.5" fill="none"/></svg>
<div class="b" style="left:1447px;top:29px;width:1px;height:19px;background:#a9a9a9;"></div>
<svg class="s" style="left:1456.0px;top:29.0px;" width="18" height="18" viewBox="0 0 18 18"><rect x="2" y="2" width="14" height="14" fill="#fff" stroke="#111"/><text x="3" y="9" font-family="Liberation Mono" font-size="6.5" font-weight="700" fill="#111">DXF</text><text x="3" y="15" font-family="Liberation Mono" font-size="6.5" font-weight="700" fill="#111">DWG</text></svg>
<svg class="s" style="left:1481.0px;top:29.0px;" width="18" height="18" viewBox="0 0 18 18"><text x="1" y="7" font-family="Liberation Mono" font-size="6.5" font-weight="700" fill="#c8102e">DXF</text><text x="1" y="17" font-family="Liberation Mono" font-size="6.5" font-weight="700" fill="#c8102e">DWG</text><path d="M3 10 L11 10" stroke="#c8102e" stroke-width="1.3"/><path d="M13 3 L17 3 M13 6 L17 6 M13 9 L17 9 M13 12 L17 12 M13 15 L17 15 M14 2 L14 17" stroke="#111" stroke-width="1.2"/></svg>
<svg class="s" style="left:1508.0px;top:29.0px;" width="18" height="18" viewBox="0 0 18 18"><path d="M3 17 L3 9 C3 3 15 3 15 9 L15 17 L11 17 L11 9 C11 7 7 7 7 9 L7 17Z" fill="#e0141e" stroke="#111" stroke-width="0.8"/><rect x="3" y="14.5" width="4" height="2.5" fill="#eee"/><rect x="11" y="14.5" width="4" height="2.5" fill="#eee"/></svg>
<div class="b" style="left:1535px;top:29px;width:1px;height:19px;background:#a9a9a9;"></div>
<div class="b" style="left:1541px;top:27px;width:22px;height:22px;background:#d7e5f1;"></div>
<svg class="s" style="left:1543.0px;top:29.0px;" width="18" height="18" viewBox="0 0 18 18"><rect x="3" y="3" width="12" height="12" fill="none" stroke="#222" stroke-width="2"/></svg>
<svg class="s" style="left:1569.0px;top:29.0px;" width="18" height="18" viewBox="0 0 18 18"><path d="M5 1 L5 17 M9 1 L9 17 M13 1 L13 17 M1 5 L17 5 M1 9 L17 9 M1 13 L17 13" stroke="#444" stroke-width="1"/></svg>
<svg class="s" style="left:1594.0px;top:29.0px;" width="18" height="18" viewBox="0 0 18 18"><rect x="6" y="6" width="6" height="6" fill="none" stroke="#333"/><circle cx="9" cy="9" r="0.9" fill="#333"/><path d="M2 2 L3 2 M8.5 2 L9.5 2 M15 2 L16 2 M2 16 L3 16 M8.5 16 L9.5 16 M15 16 L16 16 M2 9 L3 9 M15 9 L16 9" stroke="#333"/></svg>
<svg class="s" style="left:1621.0px;top:29.0px;" width="18" height="18" viewBox="0 0 18 18"><rect x="1" y="5" width="16" height="8" rx="1" fill="#fff" stroke="#333"/><rect x="2.5" y="6.5" width="1.5" height="1.2" fill="#333"/><rect x="2.5" y="8.5" width="1.5" height="1.2" fill="#333"/><rect x="2.5" y="10.5" width="1.5" height="1.2" fill="#333"/><rect x="5.0" y="6.5" width="1.5" height="1.2" fill="#333"/><rect x="5.0" y="8.5" width="1.5" height="1.2" fill="#333"/><rect x="5.0" y="10.5" width="1.5" height="1.2" fill="#333"/><rect x="7.5" y="6.5" width="1.5" height="1.2" fill="#333"/><rect x="7.5" y="8.5" width="1.5" height="1.2" fill="#333"/><rect x="7.5" y="10.5" width="1.5" height="1.2" fill="#333"/><rect x="10.0" y="6.5" width="1.5" height="1.2" fill="#333"/><rect x="10.0" y="8.5" width="1.5" height="1.2" fill="#333"/><rect x="10.0" y="10.5" width="1.5" height="1.2" fill="#333"/><rect x="12.5" y="6.5" width="1.5" height="1.2" fill="#333"/><rect x="12.5" y="8.5" width="1.5" height="1.2" fill="#333"/><rect x="12.5" y="10.5" width="1.5" height="1.2" fill="#333"/><rect x="15.0" y="6.5" width="1.5" height="1.2" fill="#333"/><rect x="15.0" y="8.5" width="1.5" height="1.2" fill="#333"/><rect x="15.0" y="10.5" width="1.5" height="1.2" fill="#333"/></svg>
<svg class="s" style="left:1647.0px;top:29.0px;" width="18" height="18" viewBox="0 0 18 18"><rect x="2" y="3" width="14" height="9" fill="#fff" stroke="#333"/><text x="3" y="10" font-family="Liberation Sans" font-size="7" fill="#111">1.00</text><path d="M2 15 L16 15 M2 13 L2 17 M16 13 L16 17" stroke="#333"/></svg>
<svg class="s" style="left:1671.0px;top:29.0px;" width="18" height="18" viewBox="0 0 18 18"><path d="M4 1 L4 14 L17 14 M1 4 L14 4 L14 17" fill="none" stroke="#222" stroke-width="1.5"/><path d="M2 3 L4 0.5 L6 3Z M15 12 L17.5 14 L15 16Z" fill="#222"/></svg>
<svg class="s" style="left:1699.0px;top:29.0px;" width="18" height="18" viewBox="0 0 18 18"><path d="M4 2 L4 15 L17 15" fill="none" stroke="#333" stroke-width="1.4"/><path d="M4 8 C9 8 12 11 12 15" fill="none" stroke="#333"/><circle cx="8.5" cy="12" r="0.9" fill="#333"/></svg>
<svg class="s" style="left:1725.0px;top:29.0px;" width="18" height="18" viewBox="0 0 18 18"><circle cx="8" cy="10" r="6" fill="none" stroke="#666" stroke-width="1.5"/><path d="M8 10 L15 3" stroke="#666" stroke-width="1.3"/></svg>
<svg class="s" style="left:1751.0px;top:29.0px;" width="18" height="18" viewBox="0 0 18 18"><rect x="2" y="6" width="14" height="11" fill="none" stroke="#222" stroke-dasharray="1.3 1.3"/><rect x="2" y="1" width="3" height="3" fill="none" stroke="#222"/><rect x="12" y="1" width="3" height="3" fill="none" stroke="#222"/><path d="M6 9 L9 9 L9 12 L12 12" stroke="#e06a2c" stroke-width="1.3" fill="none"/></svg>
<div class="b" style="left:1775px;top:27px;width:22px;height:22px;background:#d7e5f1;"></div>
<svg class="s" style="left:1777.0px;top:29.0px;" width="18" height="18" viewBox="0 0 18 18"><path d="M2 3 L16 3 L16 12 L7 12 L3 16 L3 12 L2 12Z" fill="#fff" stroke="#222" stroke-width="1.2"/></svg>
<svg class="s" style="left:1803.0px;top:29.0px;" width="18" height="18" viewBox="0 0 18 18"><path d="M3 3 L15 15 M15 3 L3 15" stroke="#222" stroke-width="1.8"/><path d="M11 2 L16 7" stroke="#222" stroke-width="2.5"/></svg>
<div class="b" style="left:1830px;top:29px;width:1px;height:19px;background:#a9a9a9;"></div>
<svg class="s" style="left:1836.0px;top:29.0px;" width="18" height="18" viewBox="0 0 18 18"><rect x="2" y="1" width="5" height="16" fill="#fff" stroke="#111" stroke-width="1.5"/><rect x="9" y="1" width="8" height="7" fill="#fff" stroke="#111" stroke-width="1.5"/><rect x="9" y="10" width="8" height="7" fill="#fff" stroke="#111" stroke-width="1.5"/></svg>
<div class="b" style="left:1865px;top:29px;width:1px;height:19px;background:#a9a9a9;"></div>
<svg class="s" style="left:1871.0px;top:29.0px;" width="18" height="18" viewBox="0 0 18 18"><defs><radialGradient id="gl" cx="0.35" cy="0.35" r="0.7"><stop offset="0" stop-color="#8fd3ff"/><stop offset="1" stop-color="#0a46c8"/></radialGradient></defs><circle cx="9" cy="9" r="8" fill="url(#gl)"/><path d="M5 5 C7 6 8 8 6 10 C5 12 7 14 8 15 M11 3 C12 5 14 6 15 8" stroke="#cfefff" stroke-width="1.2" fill="none"/></svg>
<svg class="s" style="left:1896.0px;top:29.0px;" width="18" height="18" viewBox="0 0 18 18"><path d="M2 8 L10 3 L17 7 L17 12 L9 17 L2 13Z" fill="#6a1f8c" stroke="#111" stroke-width="0.8"/><path d="M2 8 L9 12 L17 7" fill="none" stroke="#fff" stroke-width="0.8"/><text x="8" y="10" font-family="Liberation Sans" font-weight="700" font-size="6" fill="#ffd400">?</text></svg>
<div class="b" style="left:0px;top:160px;width:525px;height:18px;background:#d9d9d9;"></div>
<div class="b" style="left:202px;top:160px;width:323px;height:18px;background:#d4d4d4;"></div>
<div class="b" style="left:0px;top:160px;width:52px;height:18px;background:#ffffff;"></div>
<div class="t" style="left:11px;top:162.34px;font-size:12px;line-height:15px;font-weight:400;color:#262626;">Views</div>
<div class="t" style="left:63px;top:162.34px;font-size:12px;line-height:15px;font-weight:400;color:#262626;">Levels</div>
<div class="t" style="left:117px;top:162.34px;font-size:12px;line-height:15px;font-weight:400;color:#262626;">Elements read</div>
<div class="b" style="left:0px;top:178px;width:525px;height:30px;background:#efefef;"></div>
<div class="b" style="left:0px;top:208px;width:525px;height:1px;background:#d6d6d6;"></div>
<svg class="s" style="left:2px;top:180px;" width="26" height="24" viewBox="0 0 26 24"><g stroke="#5a7fb0" fill="none" stroke-width="0.9"><path d="M2 10.5 L2 7.5 L5 7.5 M2 20.5 L2 23.5 L5 23.5 M16 23.5 L19 23.5 L19 20.5" /></g><g stroke="#2b5c9e" stroke-width="1" stroke-linejoin="round"><path d="M4.5 11.5 L10.5 8.5 L16.5 11.5 L16.5 18.5 L10.5 21.5 L4.5 18.5Z" fill="#fff"/><path d="M10.5 14.5 L10.5 21.5 L16.5 18.5 L16.5 11.5Z" fill="#8a9cc0"/><path d="M4.5 11.5 L10.5 14.5 L16.5 11.5" fill="none"/></g><path d="M19 2 L19 10 M15 6 L23 6" stroke="#1f5591" stroke-width="1.8"/></svg>
<svg class="s" style="left:33px;top:180px;" width="26" height="24" viewBox="0 0 26 24"><g stroke="#5a7fb0" fill="none" stroke-width="0.9"><path d="M2 10.5 L2 7.5 L5 7.5 M2 20.5 L2 23.5 L5 23.5 M16 23.5 L19 23.5 L19 20.5" /></g><g stroke="#2b5c9e" stroke-width="1" stroke-linejoin="round"><path d="M4.5 11.5 L10.5 8.5 L16.5 11.5 L16.5 18.5 L10.5 21.5 L4.5 18.5Z" fill="#fff"/><path d="M10.5 14.5 L10.5 21.5 L16.5 18.5 L16.5 11.5Z" fill="#8a9cc0"/><path d="M4.5 11.5 L10.5 14.5 L16.5 11.5" fill="none"/></g><path d="M11 13 L19 3 L22 6 L14 15Z" fill="#fff" stroke="#2b5c9e" stroke-width="1.1"/><path d="M19 3 L22 6" stroke="#1f5591" stroke-width="2"/></svg>
<svg class="s" style="left:64px;top:180px;" width="26" height="24" viewBox="0 0 26 24"><g stroke="#5a7fb0" fill="none" stroke-width="0.9"><path d="M2 10.5 L2 7.5 L5 7.5 M2 20.5 L2 23.5 L5 23.5 M16 23.5 L19 23.5 L19 20.5" /></g><g stroke="#2b5c9e" stroke-width="1" stroke-linejoin="round"><path d="M4.5 11.5 L10.5 8.5 L16.5 11.5 L16.5 18.5 L10.5 21.5 L4.5 18.5Z" fill="#fff"/><path d="M10.5 14.5 L10.5 21.5 L16.5 18.5 L16.5 11.5Z" fill="#8a9cc0"/><path d="M4.5 11.5 L10.5 14.5 L16.5 11.5" fill="none"/></g><rect x="11" y="4" width="8" height="10" fill="#fff" stroke="#2b5c9e"/><rect x="14" y="1" width="8" height="10" fill="#fff" stroke="#2b5c9e"/></svg>
<svg class="s" style="left:95px;top:180px;" width="26" height="24" viewBox="0 0 26 24"><g stroke="#5a7fb0" fill="none" stroke-width="0.9"><path d="M2 10.5 L2 7.5 L5 7.5 M2 20.5 L2 23.5 L5 23.5 M16 23.5 L19 23.5 L19 20.5" /></g><g stroke="#2b5c9e" stroke-width="1" stroke-linejoin="round"><path d="M4.5 11.5 L10.5 8.5 L16.5 11.5 L16.5 18.5 L10.5 21.5 L4.5 18.5Z" fill="#fff"/><path d="M10.5 14.5 L10.5 21.5 L16.5 18.5 L16.5 11.5Z" fill="#8a9cc0"/><path d="M4.5 11.5 L10.5 14.5 L16.5 11.5" fill="none"/></g><path d="M15 2 L21 8 M21 2 L15 8" stroke="#e01b1b" stroke-width="1.8"/></svg>
<svg class="s" style="left:127px;top:181px;" width="24" height="22" viewBox="0 0 24 22"><path d="M4 6 C8 1 16 1 20 6 C16 10 8 10 4 6Z" fill="#fff" stroke="#2b5c9e" stroke-width="1.1"/><circle cx="12" cy="5.5" r="2.5" fill="#1f5591"/><path d="M6 19 L12 13 L18 19Z" fill="#c8ccd8" stroke="#2b5c9e" stroke-width="0.8"/><path d="M2 19.5 L22 19.5" stroke="#2b5c9e" stroke-width="1.5"/></svg>
<div class="b" style="left:159px;top:182px;width:1px;height:22px;background:#a9a9a9;"></div>
<svg class="s" style="left:166px;top:183px;" width="24" height="20" viewBox="0 0 24 20"><path d="M2 6 L7 6 L9 3 L15 3 L17 6 L22 6 L22 18 L2 18Z" fill="#fff" stroke="#2b5c9e" stroke-width="1.1"/><circle cx="12" cy="12" r="4.5" fill="none" stroke="#2b5c9e" stroke-width="1.2"/><circle cx="12" cy="12" r="2.8" fill="none" stroke="#2b5c9e" stroke-width="0.7"/></svg>
<svg class="s" style="left:197px;top:182px;" width="24" height="22" viewBox="0 0 24 22"><path d="M2 6 L7 6 L9 3 L15 3 L17 6 L22 6 L22 18 L2 18Z" fill="#fff" stroke="#2b5c9e" stroke-width="1.1"/><circle cx="12" cy="12" r="4.5" fill="none" stroke="#2b5c9e" stroke-width="1.2"/><path d="M1 21 C2 17 5 16 8 16" stroke="#1f5591" stroke-width="1.8" fill="none"/><path d="M7 13 L10 16 L7 19Z" fill="#1f5591"/></svg>
<div class="b" style="left:229px;top:182px;width:1px;height:22px;background:#a9a9a9;"></div>
<svg class="s" style="left:236px;top:181px;" width="24" height="22" viewBox="0 0 24 22"><path d="M1 3 L9 7 L9 21 L1 17Z" fill="#aab8d0" stroke="#2b5c9e" stroke-width="0.9"/><path d="M3 6 L3 18 M5 7 L5 19 M7 8 L7 20 M1 9 L9 12 M1 13 L9 16" stroke="#2b5c9e" stroke-width="0.5"/><path d="M9 7 L17 5 L23 8 L23 17 L9 21" fill="#fff" stroke="#2b5c9e" stroke-width="0.9"/><path d="M17 5 L17 14 L23 17" fill="none" stroke="#9aa6bb" stroke-width="0.6"/></svg>
<svg class="s" style="left:267px;top:181px;" width="24" height="22" viewBox="0 0 24 22"><path d="M3 3 L11 7 L11 21 L3 17Z" fill="#aab8d0" stroke="#2b5c9e" stroke-width="0.9"/><path d="M5 6 L5 18 M7 7 L7 19 M9 8 L9 20" stroke="#2b5c9e" stroke-width="0.5"/><path d="M11 7 L18 5 L23 8 L23 17 L11 21" fill="#fff" stroke="#2b5c9e" stroke-width="0.9"/><path d="M1 21 C2 17 4 16 7 16" stroke="#1f5591" stroke-width="1.8" fill="none"/><path d="M6 13 L9 16 L6 19Z" fill="#1f5591"/></svg>
<div class="b" style="left:0px;top:209px;width:525px;height:235px;background:#ffffff;"></div>
<svg class="s" style="left:9px;top:213px;" width="8" height="10" viewBox="0 0 8 10"><path d="M1.5 1 L5.5 5 L1.5 9" fill="none" stroke="#555" stroke-width="1.6"/></svg>
<div class="t" style="left:25px;top:212.02px;font-size:11.5px;line-height:14px;font-weight:700;color:#2a2a2a;">Plan views</div>
<svg class="s" style="left:8px;top:234px;" width="10" height="8" viewBox="0 0 10 8"><path d="M1 1.5 L5 5.5 L9 1.5" fill="none" stroke="#444" stroke-width="1.6"/></svg>
<div class="t" style="left:25px;top:232.02px;font-size:11.5px;line-height:14px;font-weight:700;color:#2a2a2a;">3D views</div>
<div class="b" style="left:0px;top:249px;width:525px;height:20px;background:#cce4f7;"></div>
<div class="t" style="left:44px;top:252.34px;font-size:12px;line-height:15px;font-weight:400;color:#262626;">3D</div>
<div class="b" style="left:0px;top:444px;width:525px;height:8px;background:#efefef;"></div>
<svg class="s" style="left:255px;top:446px;" width="14" height="3" viewBox="0 0 14 3"><circle cx="1" cy="1.5" r="0.8" fill="#888"/><circle cx="5" cy="1.5" r="0.8" fill="#888"/><circle cx="9" cy="1.5" r="0.8" fill="#888"/><circle cx="13" cy="1.5" r="0.8" fill="#888"/></svg>
<div class="b" style="left:0px;top:452px;width:525px;height:20px;background:#d9d9d9;"></div>
<div class="t" style="left:3px;top:455.14px;font-size:12px;line-height:15px;font-weight:400;color:#262626;">Layer configuration</div>
<svg class="s" style="left:488px;top:457px;" width="12" height="8" viewBox="0 0 12 8"><path d="M1 1.5 L6 6 L11 1.5" fill="none" stroke="#111" stroke-width="1.6"/></svg>
<svg class="s" style="left:510px;top:456px;" width="11" height="11" viewBox="0 0 11 11"><path d="M1 1 L10 10 M10 1 L1 10" stroke="#111" stroke-width="1.5"/></svg>
<div class="b" style="left:0px;top:472px;width:525px;height:30px;background:#efefef;"></div>
<svg class="s" style="left:3.0px;top:475.0px;" width="24" height="24" viewBox="0 0 24 24"><g fill="#e6ebf3" stroke="#2b5c9e" stroke-width="1"><path d="M10 1 L14 1 L14.5 4 L17 5 L19.5 3 L22 5.5 L20 8 L21 10.5 L24 11 L24 14 L21 14.5 L20 17 L22 19.5 L19.5 22 L17 20 L14.5 21 L14 24 L10 24 L9.5 21 L7 20 L4.5 22 L2 19.5 L4 17 L3 14.5 L0 14 L0 11 L3 10.5 L4 8 L2 5.5 L4.5 3 L7 5 L9.5 4Z"/><circle cx="12" cy="12.5" r="5" fill="#fff"/><circle cx="12" cy="12.5" r="3" fill="#fff"/></g><path d="M12 19 C13 15 19 14 21 17 M22 20 C21 24 15 24 14 21" stroke="#1f5591" stroke-width="2" fill="none"/><path d="M20 14 L23 17.5 L19 18Z M15 24 L12 20.5 L16 20Z" fill="#1f5591"/></svg>
<svg class="s" style="left:34.0px;top:475.0px;" width="24" height="24" viewBox="0 0 24 24"><g stroke="#1f5591" stroke-width="1"><path d="M1 15 L12 21 L23 15 L12 9Z" fill="#1f5591"/><path d="M1 11 L12 17 L23 11 L12 5Z" fill="#7f97bd"/><path d="M1 8 L12 14 L23 8 L12 2Z" fill="#fff"/></g><path d="M13 19 C14 15 20 14 22 17 M22 20 C21 24 16 24 15 21" stroke="#1f5591" stroke-width="2" fill="#fff"/><path d="M21 14 L24 17.5 L20 18Z M16 24 L13 20.5 L17 20Z" fill="#1f5591"/></svg>
<div class="b" style="left:65px;top:475px;width:1px;height:24px;background:#a9a9a9;"></div>
<svg class="s" style="left:73.0px;top:475.0px;" width="24" height="24" viewBox="0 0 24 24"><g fill="#fff" stroke="#2b5c9e" stroke-width="1.1"><path d="M9 5 L22 5 L15 14 L2 14Z" fill="#e6ebf3"/><path d="M2 14 L15 14 L22 5 L22 13 L15 22 L2 22Z"/><path d="M15 14 L15 22"/><rect x="4" y="15" width="5" height="6" /></g></svg>
<svg class="s" style="left:104.0px;top:475.0px;" width="24" height="24" viewBox="0 0 24 24"><g fill="#fff" stroke="#2b5c9e" stroke-width="1.1"><rect x="3" y="12" width="18" height="10"/><path d="M3 16 L21 16"/><rect x="6" y="4" width="3" height="8" fill="#d3dbe8"/><path d="M11 12 L11 5 L13 2 L15 5 L15 12Z" fill="#1f5591"/><rect x="17" y="4" width="3" height="8" fill="#d3dbe8"/></g></svg>
<div class="b" style="left:139px;top:475px;width:1px;height:24px;background:#a9a9a9;"></div>
<svg class="s" style="left:143.0px;top:475.0px;" width="24" height="24" viewBox="0 0 24 24"><rect x="5" y="11" width="14" height="11" fill="#fff" stroke="#1f5591" stroke-width="1.5"/><path d="M7 11 L7 7 C7 1 17 1 17 7 L17 11" fill="none" stroke="#1f5591" stroke-width="1.6"/><circle cx="12" cy="15" r="1.5" fill="#1f5591"/><path d="M12 15 L12 19" stroke="#1f5591" stroke-width="1.4"/></svg>
<div class="b" style="left:174px;top:475px;width:1px;height:24px;background:#a9a9a9;"></div>
<svg class="s" style="left:182.0px;top:475.0px;" width="24" height="24" viewBox="0 0 24 24"><path d="M4 2 L11 2 L22 13 L13 22 L2 11Z" fill="#fff" stroke="#2b5c9e" stroke-width="1.2"/><circle cx="7.5" cy="7" r="2" fill="none" stroke="#2b5c9e"/><path d="M1 1 L6 6" stroke="#2b5c9e"/></svg>
<div class="b" style="left:213px;top:475px;width:1px;height:24px;background:#a9a9a9;"></div>
<svg class="s" style="left:220.0px;top:475.0px;" width="24" height="24" viewBox="0 0 24 24"><rect x="1" y="3" width="22" height="14" fill="#fff" stroke="#555" stroke-width="0.8"/><rect x="2.5" y="4" width="1.4" height="12" fill="#2aa02a"/><rect x="5.1" y="4" width="1.4" height="12" fill="#2aa02a"/><rect x="7.7" y="4" width="1.4" height="12" fill="#55aa22"/><rect x="10.3" y="4" width="1.4" height="12" fill="#77b322"/><rect x="12.9" y="4" width="1.4" height="12" fill="#bbb"/><rect x="15.5" y="4" width="1.4" height="12" fill="#d44"/><rect x="18.1" y="4" width="1.4" height="12" fill="#e22"/><rect x="20.7" y="4" width="1.4" height="12" fill="#d11"/><path d="M12 19 C14 16 20 16 22 19 C20 22 14 22 12 19Z" fill="#fff" stroke="#222"/><circle cx="17" cy="19" r="1.5" fill="#222"/></svg>
<svg class="s" style="left:251.0px;top:475.0px;" width="24" height="24" viewBox="0 0 24 24"><rect x="1" y="3" width="22" height="14" fill="#fff" stroke="#555" stroke-width="0.8"/><rect x="2.5" y="4" width="1.4" height="12" fill="#2aa02a"/><rect x="5.1" y="4" width="1.4" height="12" fill="#2aa02a"/><rect x="7.7" y="4" width="1.4" height="12" fill="#55aa22"/><rect x="10.3" y="4" width="1.4" height="12" fill="#77b322"/><rect x="12.9" y="4" width="1.4" height="12" fill="#bbb"/><rect x="15.5" y="4" width="1.4" height="12" fill="#d44"/><rect x="18.1" y="4" width="1.4" height="12" fill="#e22"/><rect x="20.7" y="4" width="1.4" height="12" fill="#d11"/><path d="M15 14 L15 21 L18 23 L22 21 L21 17 L17 16Z" fill="#fff" stroke="#333" stroke-width="0.8"/></svg>
<svg class="s" style="left:282.0px;top:475.0px;" width="24" height="24" viewBox="0 0 24 24"><rect x="1" y="3" width="22" height="14" fill="#fff" stroke="#555" stroke-width="0.8"/><rect x="2.5" y="4" width="1.4" height="12" fill="#2aa02a"/><rect x="5.1" y="4" width="1.4" height="12" fill="#2aa02a"/><rect x="7.7" y="4" width="1.4" height="12" fill="#55aa22"/><rect x="10.3" y="4" width="1.4" height="12" fill="#77b322"/><rect x="12.9" y="4" width="1.4" height="12" fill="#bbb"/><rect x="15.5" y="4" width="1.4" height="12" fill="#d44"/><rect x="18.1" y="4" width="1.4" height="12" fill="#e22"/><rect x="20.7" y="4" width="1.4" height="12" fill="#d11"/><circle cx="19" cy="19" r="4" fill="#5a7fb5" stroke="#2b5c9e"/><circle cx="19" cy="19" r="1.5" fill="#fff"/></svg>
<svg class="s" style="left:321.0px;top:475.0px;" width="24" height="24" viewBox="0 0 24 24"><path d="M12 2 L22 7 L22 18 L12 23 L2 18 L2 7Z" fill="#c9d0dc" stroke="#2b5c9e" stroke-width="1.1"/><path d="M2 7 L12 12 L22 7 M12 12 L12 23" fill="none" stroke="#2b5c9e" stroke-width="1.1"/><path d="M2 7 L12 2 L22 7 L12 12Z" fill="#eef1f6" stroke="#2b5c9e" stroke-width="1.1"/></svg>
<svg class="s" style="left:353.0px;top:475.0px;" width="24" height="24" viewBox="0 0 24 24"><path d="M3 20 L8 6 L22 4 L18 18Z" fill="#fff" stroke="#2b5c9e" stroke-width="1"/><path d="M6 13 L20 11 M5 16 L19 14 M7 9 L21 7" stroke="#2b5c9e" stroke-width="0.6"/><path d="M9 7 L5 18 M12 7 L8 18 M15 6 L11 17 M18 6 L14 17" stroke="#2b5c9e" stroke-width="0.7"/><rect x="8" y="3" width="15" height="3" rx="1.5" fill="#fff" stroke="#2b5c9e"/></svg>
<svg class="s" style="left:384.0px;top:475.0px;" width="24" height="24" viewBox="0 0 24 24"><path d="M4 4 L4 16 C4 21 12 21 12 16 L12 11 L20 11" fill="none" stroke="#2b5c9e" stroke-width="3.5"/><path d="M4 4 L4 16 C4 21 12 21 12 16 L12 11 L20 11" fill="none" stroke="#fff" stroke-width="1.5"/><path d="M20 9 L20 13" stroke="#2b5c9e" stroke-width="1.2"/></svg>
<div class="b" style="left:0px;top:502px;width:525px;height:501px;background:#ffffff;"></div>
<div class="b" style="left:0px;top:502px;width:508px;height:20px;background:#cce4f7;"></div>
<svg class="s" style="left:8px;top:508px;" width="10" height="8" viewBox="0 0 10 8"><path d="M1 1.5 L5 5.5 L9 1.5" fill="none" stroke="#444" stroke-width="1.6"/></svg>
<svg class="s" style="left:24px;top:504px;" width="18" height="17" viewBox="0 0 18 17"><path d="M1 10 L9 14.5 L17 10 L17 12.5 L9 17 L1 12.5Z" fill="#1f5591"/><path d="M1 9 L9 13 L17 9 L9 5Z" fill="#aebbd0" stroke="#1f5591" stroke-width="0.8"/><path d="M1 6 L9 10 L17 6 L9 1.5Z" fill="#fff" stroke="#1f5591" stroke-width="1.3"/></svg>
<div class="t" style="left:44px;top:505.14px;font-size:12px;line-height:15px;font-weight:700;color:#2a2a2a;">Type of pipe</div>
<svg class="s" style="left:373px;top:505px;" width="17" height="14" viewBox="0 0 17 14"><path d="M2.5 1.5 L8.5 7 L2.5 12.5Z M14.5 1.5 L8.5 7 L14.5 12.5Z" fill="#e3e8f0" stroke="#1f5591" stroke-width="1.2" stroke-linejoin="round"/><path d="M0 7 L2.5 7 M14.5 7 L17 7" stroke="#1f5591" stroke-width="1.6"/></svg>
<svg class="s" style="left:401px;top:503px;" width="19" height="18" viewBox="0 0 19 18"><path d="M3 9 L14 9 L17 16 L6 16Z" fill="#d0d0d0"/><path d="M6 10 L9 16 M9 10 L12 16 M12 10 L15 16" stroke="#b9c2d2" stroke-width="0.8"/><text x="1" y="11" font-family="Liberation Sans" font-weight="700" font-size="11" fill="#1f5591" stroke="#1f5591" stroke-width="0.45">3D</text></svg>
<svg class="s" style="left:430px;top:504px;" width="16" height="16" viewBox="0 0 16 16"><path d="M8 0.8 L14.8 4.5 L14.8 11.5 L8 15.2 L1.2 11.5 L1.2 4.5Z" fill="#8f98a6" stroke="#1f5591" stroke-width="1.2"/><path d="M1.2 4.5 L8 8.2 L14.8 4.5 M8 8.2 L8 15.2 M4.6 2.6 L11.4 6.3 M11.4 2.6 L4.6 6.3 M1.2 8 L4.6 9.9 M14.8 8 L11.4 9.9 M4.6 6.3 L4.6 13.3 M11.4 6.3 L11.4 13.3" stroke="#1f5591" stroke-width="0.8" fill="none"/><path d="M5.5 7 L8 5.6 L10.5 7 L10.5 10 L8 11.4 L5.5 10Z" fill="#fff"/></svg>
<svg class="s" style="left:458px;top:503px;" width="16" height="18" viewBox="0 0 16 18"><path d="M3.5 8 L3.5 5 C3.5 1 11.5 1 11.5 5 L11.5 6" fill="none" stroke="#8a96aa" stroke-width="1.4"/><rect x="1.5" y="8.5" width="12" height="9" rx="1" fill="#8d97a6"/><path d="M7.5 11.5 L7.5 15" stroke="#fff" stroke-width="1.6"/></svg>
<div class="t" style="left:44px;top:525.14px;font-size:12px;line-height:15px;font-weight:400;color:#262626;">Cold water</div>
<svg class="s" style="left:373px;top:525px;" width="17" height="14" viewBox="0 0 17 14"><path d="M2.5 1.5 L8.5 7 L2.5 12.5Z M14.5 1.5 L8.5 7 L14.5 12.5Z" fill="#e3e8f0" stroke="#1f5591" stroke-width="1.2" stroke-linejoin="round"/><path d="M0 7 L2.5 7 M14.5 7 L17 7" stroke="#1f5591" stroke-width="1.6"/></svg>
<svg class="s" style="left:401px;top:523px;" width="19" height="18" viewBox="0 0 19 18"><path d="M3 9 L14 9 L17 16 L6 16Z" fill="#d0d0d0"/><path d="M6 10 L9 16 M9 10 L12 16 M12 10 L15 16" stroke="#b9c2d2" stroke-width="0.8"/><text x="1" y="11" font-family="Liberation Sans" font-weight="700" font-size="11" fill="#1f5591" stroke="#1f5591" stroke-width="0.45">3D</text></svg>
<svg class="s" style="left:430px;top:524px;" width="16" height="16" viewBox="0 0 16 16"><path d="M8 0.8 L14.8 4.5 L14.8 11.5 L8 15.2 L1.2 11.5 L1.2 4.5Z" fill="#8f98a6" stroke="#1f5591" stroke-width="1.2"/><path d="M1.2 4.5 L8 8.2 L14.8 4.5 M8 8.2 L8 15.2 M4.6 2.6 L11.4 6.3 M11.4 2.6 L4.6 6.3 M1.2 8 L4.6 9.9 M14.8 8 L11.4 9.9 M4.6 6.3 L4.6 13.3 M11.4 6.3 L11.4 13.3" stroke="#1f5591" stroke-width="0.8" fill="none"/><path d="M5.5 7 L8 5.6 L10.5 7 L10.5 10 L8 11.4 L5.5 10Z" fill="#fff"/></svg>
<svg class="s" style="left:458px;top:523px;" width="16" height="18" viewBox="0 0 16 18"><path d="M3.5 8 L3.5 5 C3.5 1 11.5 1 11.5 5 L11.5 6" fill="none" stroke="#8a96aa" stroke-width="1.4"/><rect x="1.5" y="8.5" width="12" height="9" rx="1" fill="#8d97a6"/><path d="M7.5 11.5 L7.5 15" stroke="#fff" stroke-width="1.6"/></svg>
<div class="b" style="left:486px;top:524px;width:16px;height:16px;background:#0a0ae6;"></div>
<div class="t" style="left:44px;top:545.14px;font-size:12px;line-height:15px;font-weight:400;color:#262626;">Hot water</div>
<svg class="s" style="left:373px;top:545px;" width="17" height="14" viewBox="0 0 17 14"><path d="M2.5 1.5 L8.5 7 L2.5 12.5Z M14.5 1.5 L8.5 7 L14.5 12.5Z" fill="#e3e8f0" stroke="#1f5591" stroke-width="1.2" stroke-linejoin="round"/><path d="M0 7 L2.5 7 M14.5 7 L17 7" stroke="#1f5591" stroke-width="1.6"/></svg>
<svg class="s" style="left:401px;top:543px;" width="19" height="18" viewBox="0 0 19 18"><path d="M3 9 L14 9 L17 16 L6 16Z" fill="#d0d0d0"/><path d="M6 10 L9 16 M9 10 L12 16 M12 10 L15 16" stroke="#b9c2d2" stroke-width="0.8"/><text x="1" y="11" font-family="Liberation Sans" font-weight="700" font-size="11" fill="#1f5591" stroke="#1f5591" stroke-width="0.45">3D</text></svg>
<svg class="s" style="left:430px;top:544px;" width="16" height="16" viewBox="0 0 16 16"><path d="M8 0.8 L14.8 4.5 L14.8 11.5 L8 15.2 L1.2 11.5 L1.2 4.5Z" fill="#8f98a6" stroke="#1f5591" stroke-width="1.2"/><path d="M1.2 4.5 L8 8.2 L14.8 4.5 M8 8.2 L8 15.2 M4.6 2.6 L11.4 6.3 M11.4 2.6 L4.6 6.3 M1.2 8 L4.6 9.9 M14.8 8 L11.4 9.9 M4.6 6.3 L4.6 13.3 M11.4 6.3 L11.4 13.3" stroke="#1f5591" stroke-width="0.8" fill="none"/><path d="M5.5 7 L8 5.6 L10.5 7 L10.5 10 L8 11.4 L5.5 10Z" fill="#fff"/></svg>
<svg class="s" style="left:458px;top:543px;" width="16" height="18" viewBox="0 0 16 18"><path d="M3.5 8 L3.5 5 C3.5 1 11.5 1 11.5 5 L11.5 6" fill="none" stroke="#8a96aa" stroke-width="1.4"/><rect x="1.5" y="8.5" width="12" height="9" rx="1" fill="#8d97a6"/><path d="M7.5 11.5 L7.5 15" stroke="#fff" stroke-width="1.6"/></svg>
<div class="b" style="left:486px;top:544px;width:16px;height:16px;background:#e60a0a;"></div>
<div class="t" style="left:44px;top:565.14px;font-size:12px;line-height:15px;font-weight:400;color:#262626;">Hydromixer</div>
<svg class="s" style="left:373px;top:565px;" width="17" height="14" viewBox="0 0 17 14"><path d="M2.5 1.5 L8.5 7 L2.5 12.5Z M14.5 1.5 L8.5 7 L14.5 12.5Z" fill="#e3e8f0" stroke="#1f5591" stroke-width="1.2" stroke-linejoin="round"/><path d="M0 7 L2.5 7 M14.5 7 L17 7" stroke="#1f5591" stroke-width="1.6"/></svg>
<svg class="s" style="left:401px;top:563px;" width="19" height="18" viewBox="0 0 19 18"><path d="M3 9 L14 9 L17 16 L6 16Z" fill="#d0d0d0"/><path d="M6 10 L9 16 M9 10 L12 16 M12 10 L15 16" stroke="#b9c2d2" stroke-width="0.8"/><text x="1" y="11" font-family="Liberation Sans" font-weight="700" font-size="11" fill="#1f5591" stroke="#1f5591" stroke-width="0.45">3D</text></svg>
<svg class="s" style="left:430px;top:564px;" width="16" height="16" viewBox="0 0 16 16"><path d="M8 0.8 L14.8 4.5 L14.8 11.5 L8 15.2 L1.2 11.5 L1.2 4.5Z" fill="#8f98a6" stroke="#1f5591" stroke-width="1.2"/><path d="M1.2 4.5 L8 8.2 L14.8 4.5 M8 8.2 L8 15.2 M4.6 2.6 L11.4 6.3 M11.4 2.6 L4.6 6.3 M1.2 8 L4.6 9.9 M14.8 8 L11.4 9.9 M4.6 6.3 L4.6 13.3 M11.4 6.3 L11.4 13.3" stroke="#1f5591" stroke-width="0.8" fill="none"/><path d="M5.5 7 L8 5.6 L10.5 7 L10.5 10 L8 11.4 L5.5 10Z" fill="#fff"/></svg>
<svg class="s" style="left:458px;top:563px;" width="16" height="18" viewBox="0 0 16 18"><path d="M3.5 8 L3.5 5 C3.5 1 11.5 1 11.5 5 L11.5 6" fill="none" stroke="#8a96aa" stroke-width="1.4"/><rect x="1.5" y="8.5" width="12" height="9" rx="1" fill="#8d97a6"/><path d="M7.5 11.5 L7.5 15" stroke="#fff" stroke-width="1.6"/></svg>
<div class="b" style="left:486px;top:564px;width:16px;height:16px;background:#b05be0;"></div>
<div class="t" style="left:44px;top:585.14px;font-size:12px;line-height:15px;font-weight:400;color:#262626;">Common</div>
<svg class="s" style="left:373px;top:585px;" width="17" height="14" viewBox="0 0 17 14"><path d="M2.5 1.5 L8.5 7 L2.5 12.5Z M14.5 1.5 L8.5 7 L14.5 12.5Z" fill="#e3e8f0" stroke="#1f5591" stroke-width="1.2" stroke-linejoin="round"/><path d="M0 7 L2.5 7 M14.5 7 L17 7" stroke="#1f5591" stroke-width="1.6"/></svg>
<svg class="s" style="left:401px;top:583px;" width="19" height="18" viewBox="0 0 19 18"><path d="M3 9 L14 9 L17 16 L6 16Z" fill="#d0d0d0"/><path d="M6 10 L9 16 M9 10 L12 16 M12 10 L15 16" stroke="#b9c2d2" stroke-width="0.8"/><text x="1" y="11" font-family="Liberation Sans" font-weight="700" font-size="11" fill="#1f5591" stroke="#1f5591" stroke-width="0.45">3D</text></svg>
<svg class="s" style="left:430px;top:584px;" width="16" height="16" viewBox="0 0 16 16"><path d="M8 0.8 L14.8 4.5 L14.8 11.5 L8 15.2 L1.2 11.5 L1.2 4.5Z" fill="#8f98a6" stroke="#1f5591" stroke-width="1.2"/><path d="M1.2 4.5 L8 8.2 L14.8 4.5 M8 8.2 L8 15.2 M4.6 2.6 L11.4 6.3 M11.4 2.6 L4.6 6.3 M1.2 8 L4.6 9.9 M14.8 8 L11.4 9.9 M4.6 6.3 L4.6 13.3 M11.4 6.3 L11.4 13.3" stroke="#1f5591" stroke-width="0.8" fill="none"/><path d="M5.5 7 L8 5.6 L10.5 7 L10.5 10 L8 11.4 L5.5 10Z" fill="#fff"/></svg>
<svg class="s" style="left:458px;top:583px;" width="16" height="18" viewBox="0 0 16 18"><path d="M3.5 8 L3.5 5 C3.5 1 11.5 1 11.5 5 L11.5 6" fill="none" stroke="#8a96aa" stroke-width="1.4"/><rect x="1.5" y="8.5" width="12" height="9" rx="1" fill="#8d97a6"/><path d="M7.5 11.5 L7.5 15" stroke="#fff" stroke-width="1.6"/></svg>
<div class="b" style="left:486px;top:584px;width:16px;height:16px;background:#6e6e6e;"></div>
<svg class="s" style="left:8px;top:608px;" width="10" height="8" viewBox="0 0 10 8"><path d="M1 1.5 L5 5.5 L9 1.5" fill="none" stroke="#444" stroke-width="1.6"/></svg>
<svg class="s" style="left:24px;top:604px;" width="18" height="17" viewBox="0 0 18 17"><path d="M1 10 L9 14.5 L17 10 L17 12.5 L9 17 L1 12.5Z" fill="#1f5591"/><path d="M1 9 L9 13 L17 9 L9 5Z" fill="#aebbd0" stroke="#1f5591" stroke-width="0.8"/><path d="M1 6 L9 10 L17 6 L9 1.5Z" fill="#fff" stroke="#1f5591" stroke-width="1.3"/></svg>
<div class="t" style="left:44px;top:605.14px;font-size:12px;line-height:15px;font-weight:700;color:#2a2a2a;">Own elements</div>
<svg class="s" style="left:373px;top:605px;" width="17" height="14" viewBox="0 0 17 14"><path d="M2.5 1.5 L8.5 7 L2.5 12.5Z M14.5 1.5 L8.5 7 L14.5 12.5Z" fill="#e3e8f0" stroke="#1f5591" stroke-width="1.2" stroke-linejoin="round"/><path d="M0 7 L2.5 7 M14.5 7 L17 7" stroke="#1f5591" stroke-width="1.6"/></svg>
<svg class="s" style="left:401px;top:603px;" width="19" height="18" viewBox="0 0 19 18"><path d="M3 9 L14 9 L17 16 L6 16Z" fill="#d0d0d0"/><path d="M6 10 L9 16 M9 10 L12 16 M12 10 L15 16" stroke="#b9c2d2" stroke-width="0.8"/><text x="1" y="11" font-family="Liberation Sans" font-weight="700" font-size="11" fill="#1f5591" stroke="#1f5591" stroke-width="0.45">3D</text></svg>
<svg class="s" style="left:430px;top:604px;" width="16" height="16" viewBox="0 0 16 16"><path d="M8 0.8 L14.8 4.5 L14.8 11.5 L8 15.2 L1.2 11.5 L1.2 4.5Z" fill="#8f98a6" stroke="#1f5591" stroke-width="1.2"/><path d="M1.2 4.5 L8 8.2 L14.8 4.5 M8 8.2 L8 15.2 M4.6 2.6 L11.4 6.3 M11.4 2.6 L4.6 6.3 M1.2 8 L4.6 9.9 M14.8 8 L11.4 9.9 M4.6 6.3 L4.6 13.3 M11.4 6.3 L11.4 13.3" stroke="#1f5591" stroke-width="0.8" fill="none"/><path d="M5.5 7 L8 5.6 L10.5 7 L10.5 10 L8 11.4 L5.5 10Z" fill="#fff"/></svg>
<svg class="s" style="left:458px;top:603px;" width="16" height="18" viewBox="0 0 16 18"><path d="M3.5 8 L3.5 5 C3.5 1 11.5 1 11.5 5 L11.5 6" fill="none" stroke="#8a96aa" stroke-width="1.4"/><rect x="1.5" y="8.5" width="12" height="9" rx="1" fill="#8d97a6"/><path d="M7.5 11.5 L7.5 15" stroke="#fff" stroke-width="1.6"/></svg>
<div class="t" style="left:44px;top:625.14px;font-size:12px;line-height:15px;font-weight:400;color:#262626;">Consumptions</div>
<svg class="s" style="left:373px;top:625px;" width="17" height="14" viewBox="0 0 17 14"><path d="M2.5 1.5 L8.5 7 L2.5 12.5Z M14.5 1.5 L8.5 7 L14.5 12.5Z" fill="#e3e8f0" stroke="#1f5591" stroke-width="1.2" stroke-linejoin="round"/><path d="M0 7 L2.5 7 M14.5 7 L17 7" stroke="#1f5591" stroke-width="1.6"/></svg>
<svg class="s" style="left:401px;top:623px;" width="19" height="18" viewBox="0 0 19 18"><path d="M3 9 L14 9 L17 16 L6 16Z" fill="#d0d0d0"/><path d="M6 10 L9 16 M9 10 L12 16 M12 10 L15 16" stroke="#b9c2d2" stroke-width="0.8"/><text x="1" y="11" font-family="Liberation Sans" font-weight="700" font-size="11" fill="#1f5591" stroke="#1f5591" stroke-width="0.45">3D</text></svg>
<svg class="s" style="left:430px;top:624px;" width="16" height="16" viewBox="0 0 16 16"><path d="M8 0.8 L14.8 4.5 L14.8 11.5 L8 15.2 L1.2 11.5 L1.2 4.5Z" fill="#8f98a6" stroke="#1f5591" stroke-width="1.2"/><path d="M1.2 4.5 L8 8.2 L14.8 4.5 M8 8.2 L8 15.2 M4.6 2.6 L11.4 6.3 M11.4 2.6 L4.6 6.3 M1.2 8 L4.6 9.9 M14.8 8 L11.4 9.9 M4.6 6.3 L4.6 13.3 M11.4 6.3 L11.4 13.3" stroke="#1f5591" stroke-width="0.8" fill="none"/><path d="M5.5 7 L8 5.6 L10.5 7 L10.5 10 L8 11.4 L5.5 10Z" fill="#fff"/></svg>
<svg class="s" style="left:458px;top:623px;" width="16" height="18" viewBox="0 0 16 18"><path d="M3.5 8 L3.5 5 C3.5 1 11.5 1 11.5 5 L11.5 6" fill="none" stroke="#8a96aa" stroke-width="1.4"/><rect x="1.5" y="8.5" width="12" height="9" rx="1" fill="#8d97a6"/><path d="M7.5 11.5 L7.5 15" stroke="#fff" stroke-width="1.6"/></svg>
<div class="b" style="left:486px;top:624px;width:16px;height:16px;background:#a63838;"></div>
<div class="t" style="left:44px;top:645.14px;font-size:12px;line-height:15px;font-weight:400;color:#262626;">Hot water production</div>
<svg class="s" style="left:373px;top:645px;" width="17" height="14" viewBox="0 0 17 14"><path d="M2.5 1.5 L8.5 7 L2.5 12.5Z M14.5 1.5 L8.5 7 L14.5 12.5Z" fill="#e3e8f0" stroke="#1f5591" stroke-width="1.2" stroke-linejoin="round"/><path d="M0 7 L2.5 7 M14.5 7 L17 7" stroke="#1f5591" stroke-width="1.6"/></svg>
<svg class="s" style="left:401px;top:643px;" width="19" height="18" viewBox="0 0 19 18"><path d="M3 9 L14 9 L17 16 L6 16Z" fill="#d0d0d0"/><path d="M6 10 L9 16 M9 10 L12 16 M12 10 L15 16" stroke="#b9c2d2" stroke-width="0.8"/><text x="1" y="11" font-family="Liberation Sans" font-weight="700" font-size="11" fill="#1f5591" stroke="#1f5591" stroke-width="0.45">3D</text></svg>
<svg class="s" style="left:430px;top:644px;" width="16" height="16" viewBox="0 0 16 16"><path d="M8 0.8 L14.8 4.5 L14.8 11.5 L8 15.2 L1.2 11.5 L1.2 4.5Z" fill="#8f98a6" stroke="#1f5591" stroke-width="1.2"/><path d="M1.2 4.5 L8 8.2 L14.8 4.5 M8 8.2 L8 15.2 M4.6 2.6 L11.4 6.3 M11.4 2.6 L4.6 6.3 M1.2 8 L4.6 9.9 M14.8 8 L11.4 9.9 M4.6 6.3 L4.6 13.3 M11.4 6.3 L11.4 13.3" stroke="#1f5591" stroke-width="0.8" fill="none"/><path d="M5.5 7 L8 5.6 L10.5 7 L10.5 10 L8 11.4 L5.5 10Z" fill="#fff"/></svg>
<svg class="s" style="left:458px;top:643px;" width="16" height="18" viewBox="0 0 16 18"><path d="M3.5 8 L3.5 5 C3.5 1 11.5 1 11.5 5 L11.5 6" fill="none" stroke="#8a96aa" stroke-width="1.4"/><rect x="1.5" y="8.5" width="12" height="9" rx="1" fill="#8d97a6"/><path d="M7.5 11.5 L7.5 15" stroke="#fff" stroke-width="1.6"/></svg>
<div class="b" style="left:486px;top:644px;width:16px;height:16px;background:#d63333;"></div>
<div class="t" style="left:44px;top:665.14px;font-size:12px;line-height:15px;font-weight:400;color:#262626;">Supply connection points</div>
<svg class="s" style="left:373px;top:665px;" width="17" height="14" viewBox="0 0 17 14"><path d="M2.5 1.5 L8.5 7 L2.5 12.5Z M14.5 1.5 L8.5 7 L14.5 12.5Z" fill="#e3e8f0" stroke="#1f5591" stroke-width="1.2" stroke-linejoin="round"/><path d="M0 7 L2.5 7 M14.5 7 L17 7" stroke="#1f5591" stroke-width="1.6"/></svg>
<svg class="s" style="left:401px;top:663px;" width="19" height="18" viewBox="0 0 19 18"><path d="M3 9 L14 9 L17 16 L6 16Z" fill="#d0d0d0"/><path d="M6 10 L9 16 M9 10 L12 16 M12 10 L15 16" stroke="#b9c2d2" stroke-width="0.8"/><text x="1" y="11" font-family="Liberation Sans" font-weight="700" font-size="11" fill="#1f5591" stroke="#1f5591" stroke-width="0.45">3D</text></svg>
<svg class="s" style="left:430px;top:664px;" width="16" height="16" viewBox="0 0 16 16"><path d="M8 0.8 L14.8 4.5 L14.8 11.5 L8 15.2 L1.2 11.5 L1.2 4.5Z" fill="#8f98a6" stroke="#1f5591" stroke-width="1.2"/><path d="M1.2 4.5 L8 8.2 L14.8 4.5 M8 8.2 L8 15.2 M4.6 2.6 L11.4 6.3 M11.4 2.6 L4.6 6.3 M1.2 8 L4.6 9.9 M14.8 8 L11.4 9.9 M4.6 6.3 L4.6 13.3 M11.4 6.3 L11.4 13.3" stroke="#1f5591" stroke-width="0.8" fill="none"/><path d="M5.5 7 L8 5.6 L10.5 7 L10.5 10 L8 11.4 L5.5 10Z" fill="#fff"/></svg>
<svg class="s" style="left:458px;top:663px;" width="16" height="18" viewBox="0 0 16 18"><path d="M3.5 8 L3.5 5 C3.5 1 11.5 1 11.5 5 L11.5 6" fill="none" stroke="#8a96aa" stroke-width="1.4"/><rect x="1.5" y="8.5" width="12" height="9" rx="1" fill="#8d97a6"/><path d="M7.5 11.5 L7.5 15" stroke="#fff" stroke-width="1.6"/></svg>
<div class="b" style="left:486px;top:664px;width:16px;height:16px;background:#707070;"></div>
<div class="t" style="left:44px;top:685.14px;font-size:12px;line-height:15px;font-weight:400;color:#262626;">Meters</div>
<svg class="s" style="left:373px;top:685px;" width="17" height="14" viewBox="0 0 17 14"><path d="M2.5 1.5 L8.5 7 L2.5 12.5Z M14.5 1.5 L8.5 7 L14.5 12.5Z" fill="#e3e8f0" stroke="#1f5591" stroke-width="1.2" stroke-linejoin="round"/><path d="M0 7 L2.5 7 M14.5 7 L17 7" stroke="#1f5591" stroke-width="1.6"/></svg>
<svg class="s" style="left:401px;top:683px;" width="19" height="18" viewBox="0 0 19 18"><path d="M3 9 L14 9 L17 16 L6 16Z" fill="#d0d0d0"/><path d="M6 10 L9 16 M9 10 L12 16 M12 10 L15 16" stroke="#b9c2d2" stroke-width="0.8"/><text x="1" y="11" font-family="Liberation Sans" font-weight="700" font-size="11" fill="#1f5591" stroke="#1f5591" stroke-width="0.45">3D</text></svg>
<svg class="s" style="left:430px;top:684px;" width="16" height="16" viewBox="0 0 16 16"><path d="M8 0.8 L14.8 4.5 L14.8 11.5 L8 15.2 L1.2 11.5 L1.2 4.5Z" fill="#8f98a6" stroke="#1f5591" stroke-width="1.2"/><path d="M1.2 4.5 L8 8.2 L14.8 4.5 M8 8.2 L8 15.2 M4.6 2.6 L11.4 6.3 M11.4 2.6 L4.6 6.3 M1.2 8 L4.6 9.9 M14.8 8 L11.4 9.9 M4.6 6.3 L4.6 13.3 M11.4 6.3 L11.4 13.3" stroke="#1f5591" stroke-width="0.8" fill="none"/><path d="M5.5 7 L8 5.6 L10.5 7 L10.5 10 L8 11.4 L5.5 10Z" fill="#fff"/></svg>
<svg class="s" style="left:458px;top:683px;" width="16" height="18" viewBox="0 0 16 18"><path d="M3.5 8 L3.5 5 C3.5 1 11.5 1 11.5 5 L11.5 6" fill="none" stroke="#8a96aa" stroke-width="1.4"/><rect x="1.5" y="8.5" width="12" height="9" rx="1" fill="#8d97a6"/><path d="M7.5 11.5 L7.5 15" stroke="#fff" stroke-width="1.6"/></svg>
<div class="b" style="left:486px;top:684px;width:16px;height:16px;background:#1a1ae6;"></div>
<div class="t" style="left:44px;top:705.14px;font-size:12px;line-height:15px;font-weight:400;color:#262626;">Fittings</div>
<svg class="s" style="left:373px;top:705px;" width="17" height="14" viewBox="0 0 17 14"><path d="M2.5 1.5 L8.5 7 L2.5 12.5Z M14.5 1.5 L8.5 7 L14.5 12.5Z" fill="#e3e8f0" stroke="#1f5591" stroke-width="1.2" stroke-linejoin="round"/><path d="M0 7 L2.5 7 M14.5 7 L17 7" stroke="#1f5591" stroke-width="1.6"/></svg>
<svg class="s" style="left:401px;top:703px;" width="19" height="18" viewBox="0 0 19 18"><path d="M3 9 L14 9 L17 16 L6 16Z" fill="#d0d0d0"/><path d="M6 10 L9 16 M9 10 L12 16 M12 10 L15 16" stroke="#b9c2d2" stroke-width="0.8"/><text x="1" y="11" font-family="Liberation Sans" font-weight="700" font-size="11" fill="#1f5591" stroke="#1f5591" stroke-width="0.45">3D</text></svg>
<svg class="s" style="left:430px;top:704px;" width="16" height="16" viewBox="0 0 16 16"><path d="M8 0.8 L14.8 4.5 L14.8 11.5 L8 15.2 L1.2 11.5 L1.2 4.5Z" fill="#8f98a6" stroke="#1f5591" stroke-width="1.2"/><path d="M1.2 4.5 L8 8.2 L14.8 4.5 M8 8.2 L8 15.2 M4.6 2.6 L11.4 6.3 M11.4 2.6 L4.6 6.3 M1.2 8 L4.6 9.9 M14.8 8 L11.4 9.9 M4.6 6.3 L4.6 13.3 M11.4 6.3 L11.4 13.3" stroke="#1f5591" stroke-width="0.8" fill="none"/><path d="M5.5 7 L8 5.6 L10.5 7 L10.5 10 L8 11.4 L5.5 10Z" fill="#fff"/></svg>
<svg class="s" style="left:458px;top:703px;" width="16" height="18" viewBox="0 0 16 18"><path d="M3.5 8 L3.5 5 C3.5 1 11.5 1 11.5 5 L11.5 6" fill="none" stroke="#8a96aa" stroke-width="1.4"/><rect x="1.5" y="8.5" width="12" height="9" rx="1" fill="#8d97a6"/><path d="M7.5 11.5 L7.5 15" stroke="#fff" stroke-width="1.6"/></svg>
<div class="b" style="left:486px;top:704px;width:16px;height:16px;background:#7a3535;"></div>
<div class="t" style="left:44px;top:725.14px;font-size:12px;line-height:15px;font-weight:400;color:#262626;">Pipes</div>
<svg class="s" style="left:373px;top:725px;" width="17" height="14" viewBox="0 0 17 14"><path d="M2.5 1.5 L8.5 7 L2.5 12.5Z M14.5 1.5 L8.5 7 L14.5 12.5Z" fill="#e3e8f0" stroke="#1f5591" stroke-width="1.2" stroke-linejoin="round"/><path d="M0 7 L2.5 7 M14.5 7 L17 7" stroke="#1f5591" stroke-width="1.6"/></svg>
<svg class="s" style="left:401px;top:723px;" width="19" height="18" viewBox="0 0 19 18"><path d="M3 9 L14 9 L17 16 L6 16Z" fill="#d0d0d0"/><path d="M6 10 L9 16 M9 10 L12 16 M12 10 L15 16" stroke="#b9c2d2" stroke-width="0.8"/><text x="1" y="11" font-family="Liberation Sans" font-weight="700" font-size="11" fill="#1f5591" stroke="#1f5591" stroke-width="0.45">3D</text></svg>
<svg class="s" style="left:430px;top:724px;" width="16" height="16" viewBox="0 0 16 16"><path d="M8 0.8 L14.8 4.5 L14.8 11.5 L8 15.2 L1.2 11.5 L1.2 4.5Z" fill="#8f98a6" stroke="#1f5591" stroke-width="1.2"/><path d="M1.2 4.5 L8 8.2 L14.8 4.5 M8 8.2 L8 15.2 M4.6 2.6 L11.4 6.3 M11.4 2.6 L4.6 6.3 M1.2 8 L4.6 9.9 M14.8 8 L11.4 9.9 M4.6 6.3 L4.6 13.3 M11.4 6.3 L11.4 13.3" stroke="#1f5591" stroke-width="0.8" fill="none"/><path d="M5.5 7 L8 5.6 L10.5 7 L10.5 10 L8 11.4 L5.5 10Z" fill="#fff"/></svg>
<svg class="s" style="left:458px;top:723px;" width="16" height="18" viewBox="0 0 16 18"><path d="M3.5 8 L3.5 5 C3.5 1 11.5 1 11.5 5 L11.5 6" fill="none" stroke="#8a96aa" stroke-width="1.4"/><rect x="1.5" y="8.5" width="12" height="9" rx="1" fill="#8d97a6"/><path d="M7.5 11.5 L7.5 15" stroke="#fff" stroke-width="1.6"/></svg>
<div class="b" style="left:486px;top:724px;width:16px;height:16px;background:#3a973a;"></div>
<svg class="s" style="left:9px;top:747px;" width="8" height="10" viewBox="0 0 8 10"><path d="M1.5 1 L5.5 5 L1.5 9" fill="none" stroke="#555" stroke-width="1.6"/></svg>
<svg class="s" style="left:24px;top:744px;" width="18" height="17" viewBox="0 0 18 17"><path d="M1 10 L9 14.5 L17 10 L17 12.5 L9 17 L1 12.5Z" fill="#1f5591"/><path d="M1 9 L9 13 L17 9 L9 5Z" fill="#aebbd0" stroke="#1f5591" stroke-width="0.8"/><path d="M1 6 L9 10 L17 6 L9 1.5Z" fill="#fff" stroke="#1f5591" stroke-width="1.3"/></svg>
<div class="t" style="left:44px;top:745.14px;font-size:12px;line-height:15px;font-weight:700;color:#2a2a2a;">General options</div>
<svg class="s" style="left:373px;top:745px;" width="17" height="14" viewBox="0 0 17 14"><path d="M2.5 1.5 L8.5 7 L2.5 12.5Z M14.5 1.5 L8.5 7 L14.5 12.5Z" fill="#e3e8f0" stroke="#1f5591" stroke-width="1.2" stroke-linejoin="round"/><path d="M0 7 L2.5 7 M14.5 7 L17 7" stroke="#1f5591" stroke-width="1.6"/></svg>
<svg class="s" style="left:401px;top:743px;" width="19" height="18" viewBox="0 0 19 18"><path d="M3 9 L14 9 L17 16 L6 16Z" fill="#d0d0d0"/><path d="M6 10 L9 16 M9 10 L12 16 M12 10 L15 16" stroke="#b9c2d2" stroke-width="0.8"/><text x="1" y="11" font-family="Liberation Sans" font-weight="700" font-size="11" fill="#1f5591" stroke="#1f5591" stroke-width="0.45">3D</text></svg>
<svg class="s" style="left:430px;top:744px;" width="16" height="16" viewBox="0 0 16 16"><path d="M8 0.8 L14.8 4.5 L14.8 11.5 L8 15.2 L1.2 11.5 L1.2 4.5Z" fill="#8f98a6" stroke="#1f5591" stroke-width="1.2"/><path d="M1.2 4.5 L8 8.2 L14.8 4.5 M8 8.2 L8 15.2 M4.6 2.6 L11.4 6.3 M11.4 2.6 L4.6 6.3 M1.2 8 L4.6 9.9 M14.8 8 L11.4 9.9 M4.6 6.3 L4.6 13.3 M11.4 6.3 L11.4 13.3" stroke="#1f5591" stroke-width="0.8" fill="none"/><path d="M5.5 7 L8 5.6 L10.5 7 L10.5 10 L8 11.4 L5.5 10Z" fill="#fff"/></svg>
<svg class="s" style="left:458px;top:743px;" width="16" height="18" viewBox="0 0 16 18"><path d="M3.5 8 L3.5 5 C3.5 1 11.5 1 11.5 5 L11.5 6" fill="none" stroke="#8a96aa" stroke-width="1.4"/><rect x="1.5" y="8.5" width="12" height="9" rx="1" fill="#8d97a6"/><path d="M7.5 11.5 L7.5 15" stroke="#fff" stroke-width="1.6"/></svg>
<div class="b" style="left:314px;top:469px;width:38px;height:37px;background:transparent;box-sizing:border-box;border:3px solid #d2232a;"></div>
<div class="b" style="left:525px;top:160px;width:8px;height:843px;background:#efefef;"></div>
<svg class="s" style="left:527px;top:574px;" width="4" height="14" viewBox="0 0 4 14"><circle cx="2" cy="1" r="0.8" fill="#999"/><circle cx="2" cy="5" r="0.8" fill="#999"/><circle cx="2" cy="9" r="0.8" fill="#999"/><circle cx="2" cy="13" r="0.8" fill="#999"/></svg>
<div class="b" style="left:0px;top:1003px;width:1920px;height:37px;background:#efefef;"></div>
<div class="b" style="left:0px;top:1003px;width:123px;height:19px;background:#cce4f7;"></div>
<div class="t" style="left:12px;top:1004.79px;font-size:13.6px;line-height:17px;font-weight:700;color:#262626;">Water Systems</div>
<div class="t" style="left:141px;top:1005.70px;font-size:12.4px;line-height:16px;font-weight:400;color:#262626;">Solar Systems</div>
<div class="t" style="left:261px;top:1005.70px;font-size:12.4px;line-height:16px;font-weight:400;color:#262626;">Sanitary Systems</div>
<div class="t" style="left:393px;top:1005.70px;font-size:12.4px;line-height:16px;font-weight:400;color:#262626;">Layout</div>
<div class="t" style="left:8px;top:1023.88px;font-size:11.9px;line-height:15px;font-weight:400;color:#1a1a1a;">Select a group of elements.</div>
<div class="b" style="left:533px;top:159px;width:1387px;height:21px;background:#d6d6d6;"></div>
<div class="t" style="left:536px;top:164.34px;font-size:12px;line-height:15px;font-weight:400;color:#262626;">Work area</div>
<div class="b" style="left:533px;top:180px;width:1387px;height:30px;background:#f0f0f0;"></div>
<div class="b" style="left:533px;top:210px;width:1387px;height:761px;background:#ffffff;"></div>
<div class="b" style="left:533px;top:971px;width:1387px;height:8px;background:#efefef;"></div>
<div class="b" style="left:533px;top:979px;width:1387px;height:24px;background:#f4f4f4;"></div>
<svg class="s" style="left:1671.0px;top:187.0px;" width="18" height="18" viewBox="0 0 18 18"><path d="M9 9 L9 1 M9 9 L2 15 M9 9 L16 13" stroke="#4d7d96" stroke-width="1.3" fill="none"/></svg>
<svg class="s" style="left:1695.0px;top:187.0px;" width="18" height="18" viewBox="0 0 18 18"><path d="M2 6 L6 2 L16 2 L16 12 L12 16 L2 16Z" fill="#b5dbef" stroke="#111" stroke-width="1.3"/><path d="M2 6 L12 6 L16 2 M12 6 L12 16" fill="none" stroke="#111" stroke-width="1.2"/></svg>
<svg class="s" style="left:1719.0px;top:187.0px;" width="18" height="18" viewBox="0 0 18 18"><ellipse cx="9" cy="11" rx="7.5" ry="3.5" fill="none" stroke="#222" stroke-width="1.1"/><circle cx="8" cy="7" r="3.5" fill="#111"/><path d="M12 13 L10 15 L12 17" stroke="#222" fill="none"/></svg>
<svg class="s" style="left:1743.0px;top:187.0px;" width="18" height="18" viewBox="0 0 18 18"><ellipse cx="9" cy="12" rx="7.5" ry="3.5" fill="none" stroke="#222" stroke-width="1.1"/><path d="M9 4 L9 16" stroke="#222" stroke-width="1.4"/><circle cx="9" cy="3" r="1.8" fill="#fff" stroke="#222"/><path d="M10 13 L12 15 L10 17" stroke="#222" fill="none"/></svg>
<div class="b" style="left:1767px;top:184px;width:1px;height:22px;background:#c4c4c4;"></div>
<svg class="s" style="left:1773.0px;top:187.0px;" width="18" height="18" viewBox="0 0 18 18"><rect x="2" y="2" width="7" height="13" fill="#b5dbef" stroke="#111" stroke-width="1.2"/><rect x="9" y="2" width="6" height="13" fill="#f8c8c8" stroke="#e00" stroke-width="1.2"/><path d="M9 2 L9 16" stroke="#111" stroke-dasharray="1.5 1.5"/></svg>
<svg class="s" style="left:1797.0px;top:187.0px;" width="18" height="18" viewBox="0 0 18 18"><rect x="3" y="2" width="12" height="13" fill="#b5dbef" stroke="#111" stroke-width="1.2"/><path d="M3 15 L15 2 L3 2Z" fill="#6ef06e" stroke="#111" stroke-width="1"/><path d="M1 17 L17 1" stroke="#111" stroke-width="1"/></svg>
<svg class="s" style="left:1821.0px;top:187.0px;" width="18" height="18" viewBox="0 0 18 18"><rect x="3" y="3" width="12" height="12" fill="#b5dbef" stroke="#111" stroke-width="1.2"/><rect x="3" y="3" width="12" height="6" fill="#cfcff5" stroke="#2233aa" stroke-width="1"/><path d="M1 9 L17 9" stroke="#111" stroke-dasharray="1.5 1"/></svg>
<svg class="s" style="left:1845.0px;top:187.0px;" width="18" height="18" viewBox="0 0 18 18"><path d="M9 1 L16 5 L16 13 L9 17 L2 13 L2 5Z" fill="#9fc9e0" stroke="#555" stroke-width="0.8"/><path d="M2 5 L9 9 L16 5 L9 1Z" fill="#f0a8a8"/><path d="M2 9 L9 13 L16 9 L16 5 L9 9 L2 5Z" fill="#9dc96e"/><path d="M2 9 L9 13 L9 9 L2 5Z" fill="#b4a8dc"/></svg>
<svg class="s" style="left:1869.0px;top:187.0px;" width="18" height="18" viewBox="0 0 18 18"><path d="M1 9 C5 3 13 3 17 9 C13 15 5 15 1 9Z" fill="#111"/><circle cx="9" cy="9" r="2.5" fill="#fff"/><path d="M3 16 L15 2" stroke="#111" stroke-width="1.3"/></svg>
<div class="b" style="left:1893px;top:184px;width:1px;height:22px;background:#c4c4c4;"></div>
<svg class="s" style="left:1899.0px;top:187.0px;" width="18" height="18" viewBox="0 0 18 18"><text x="0" y="9" font-family="Liberation Sans" font-weight="700" font-size="9" fill="#222">3D</text><circle cx="10" cy="12" r="4" fill="#fff" stroke="#666" stroke-width="1" stroke-dasharray="1.5 1"/></svg>
<svg class="s" style="left:533px;top:210px;overflow:hidden" width="1387" height="761" viewBox="533 210 1387 761"><polygon points="922.0,440.0 1211.0,610.0 1209.0,941.0 924.0,776.0" fill="#aaa8a6" stroke="none" stroke-width="1" fill-opacity="1" stroke-linejoin="round" /><polygon points="922.0,440.0 930.0,445.0 930.0,780.0 924.0,776.0" fill="#c4c4c4" stroke="none" stroke-width="1" fill-opacity="1" stroke-linejoin="round" /><polygon points="1211.0,610.0 1363.0,472.0 1451.0,437.0 1451.0,714.0 1560.0,652.0 1560.0,741.0 1209.0,941.0" fill="#a8a7a6" stroke="none" stroke-width="1" fill-opacity="1" stroke-linejoin="round" /><polygon points="1451.0,437.0 1451.0,714.0 1458.0,710.0 1458.0,440.0" fill="#b7b7b7" stroke="none" stroke-width="1" fill-opacity="1" stroke-linejoin="round" /><polygon points="924.0,776.0 1209.0,941.0 1556.0,744.0 1556.0,755.0 1209.0,956.0 924.0,793.0" fill="#b3b3b3" stroke="none" stroke-width="1" fill-opacity="1" stroke-linejoin="round" /><polyline points="924.0,776.0 1209.0,941.0 1556.0,744.0" fill="none" stroke="#7d7d7d" stroke-width="0.9" stroke-opacity="1" stroke-linejoin="round" /><polyline points="924.0,793.0 1209.0,956.0 1556.0,755.0" fill="none" stroke="#8a8a8a" stroke-width="0.9" stroke-opacity="1" stroke-linejoin="round" /><polyline points="924.0,776.0 924.0,793.0" fill="none" stroke="#8a8a8a" stroke-width="0.9" stroke-opacity="1" stroke-linejoin="round" /><polyline points="1209.0,941.0 1209.0,956.0" fill="none" stroke="#8a8a8a" stroke-width="0.9" stroke-opacity="1" stroke-linejoin="round" /><polygon points="930.0,745.0 1040.0,808.0 1040.0,840.0 930.0,776.0" fill="#b4b4b4" stroke="none" stroke-width="1" fill-opacity="0.8" stroke-linejoin="round" /><polygon points="1040.0,808.0 1209.0,905.0 1209.0,941.0 1040.0,843.0" fill="#aeaeae" stroke="none" stroke-width="1" fill-opacity="0.5" stroke-linejoin="round" /><polyline points="1210.0,612.0 1209.0,941.0" fill="none" stroke="#6e6e6e" stroke-width="0.9" stroke-opacity="1" stroke-linejoin="round" /><polyline points="923.0,445.0 924.0,776.0" fill="none" stroke="#8c8c8c" stroke-width="0.9" stroke-opacity="1" stroke-linejoin="round" /><polygon points="930.0,494.0 1209.0,656.0 1209.0,672.0 930.0,510.0" fill="#b6b6b6" stroke="none" stroke-width="1" fill-opacity="0.45" stroke-linejoin="round" /><polygon points="930.0,510.0 1209.0,672.0 1209.0,680.0 930.0,518.0" fill="#9c9c9c" stroke="none" stroke-width="1" fill-opacity="0.3" stroke-linejoin="round" /><polygon points="930.0,556.0 1209.0,718.0 1209.0,734.0 930.0,572.0" fill="#b6b6b6" stroke="none" stroke-width="1" fill-opacity="0.45" stroke-linejoin="round" /><polygon points="930.0,572.0 1209.0,734.0 1209.0,742.0 930.0,580.0" fill="#9c9c9c" stroke="none" stroke-width="1" fill-opacity="0.3" stroke-linejoin="round" /><polygon points="930.0,618.0 1209.0,780.0 1209.0,796.0 930.0,634.0" fill="#b6b6b6" stroke="none" stroke-width="1" fill-opacity="0.45" stroke-linejoin="round" /><polygon points="930.0,634.0 1209.0,796.0 1209.0,804.0 930.0,642.0" fill="#9c9c9c" stroke="none" stroke-width="1" fill-opacity="0.3" stroke-linejoin="round" /><polygon points="930.0,680.0 1209.0,842.0 1209.0,858.0 930.0,696.0" fill="#b6b6b6" stroke="none" stroke-width="1" fill-opacity="0.45" stroke-linejoin="round" /><polygon points="930.0,696.0 1209.0,858.0 1209.0,866.0 930.0,704.0" fill="#9c9c9c" stroke="none" stroke-width="1" fill-opacity="0.3" stroke-linejoin="round" /><polygon points="930.0,742.0 1209.0,904.0 1209.0,920.0 930.0,758.0" fill="#b6b6b6" stroke="none" stroke-width="1" fill-opacity="0.45" stroke-linejoin="round" /><polygon points="930.0,758.0 1209.0,920.0 1209.0,928.0 930.0,766.0" fill="#9c9c9c" stroke="none" stroke-width="1" fill-opacity="0.3" stroke-linejoin="round" /><defs><linearGradient id="rcool" x1="0" y1="0" x2="1" y2="0"><stop offset="0" stop-color="#a3a8ab" stop-opacity="0"/><stop offset="1" stop-color="#a3a8ab" stop-opacity="0.9"/></linearGradient></defs><polygon points="1300.0,520.0 1363.0,472.0 1451.0,437.0 1451.0,714.0 1300.0,800.0" fill="url(#rcool)" stroke="none" stroke-width="1" fill-opacity="1" stroke-linejoin="round" /><polygon points="1238.0,780.0 1244.0,777.0 1244.0,918.4 1238.0,921.4" fill="#9c9c9c" stroke="none" stroke-width="1" fill-opacity="0.35" stroke-linejoin="round" /><polygon points="1266.0,780.0 1272.0,777.0 1272.0,903.4 1266.0,906.4" fill="#9c9c9c" stroke="none" stroke-width="1" fill-opacity="0.35" stroke-linejoin="round" /><polygon points="1293.0,780.0 1299.0,777.0 1299.0,888.9 1293.0,891.9" fill="#9c9c9c" stroke="none" stroke-width="1" fill-opacity="0.35" stroke-linejoin="round" /><polygon points="1320.0,780.0 1326.0,777.0 1326.0,874.4 1320.0,877.4" fill="#9c9c9c" stroke="none" stroke-width="1" fill-opacity="0.35" stroke-linejoin="round" /><polygon points="1348.0,780.0 1354.0,777.0 1354.0,859.4 1348.0,862.4" fill="#9c9c9c" stroke="none" stroke-width="1" fill-opacity="0.35" stroke-linejoin="round" /><polygon points="1209.0,860.0 1373.0,765.0 1373.0,850.0 1209.0,945.0" fill="#a0a09f" stroke="none" stroke-width="1" fill-opacity="0.25" stroke-linejoin="round" /><polyline points="1373.0,762.0 1373.0,850.0" fill="none" stroke="#8f8f8f" stroke-width="0.8" stroke-opacity="0.5" stroke-linejoin="round" /><polyline points="1209.0,862.0 1373.0,765.0 1556.0,662.0" fill="none" stroke="#8f8f8f" stroke-width="0.8" stroke-opacity="0.4" stroke-linejoin="round" /><polyline points="1216.0,880.0 1216.0,812.0 1230.0,804.0 1230.0,870.0" fill="none" stroke="#b08a70" stroke-width="0.9" stroke-opacity="0.45" stroke-linejoin="round" /><polyline points="1238.0,880.0 1238.0,812.0 1252.0,804.0 1252.0,870.0" fill="none" stroke="#b08a70" stroke-width="0.9" stroke-opacity="0.45" stroke-linejoin="round" /><polyline points="1262.0,880.0 1262.0,812.0 1276.0,804.0 1276.0,870.0" fill="none" stroke="#b08a70" stroke-width="0.9" stroke-opacity="0.45" stroke-linejoin="round" /><polygon points="1457.0,599.0 1560.0,652.0 1560.0,741.0 1451.0,714.0" fill="#a3a6a8" stroke="none" stroke-width="1" fill-opacity="1" stroke-linejoin="round" /><polygon points="1451.0,609.0 1545.0,656.0 1451.0,714.0" fill="#969c9f" stroke="none" stroke-width="1" fill-opacity="0.85" stroke-linejoin="round" /><polygon points="1451.0,714.0 1545.0,657.0 1560.0,652.0 1560.0,741.0 1451.0,726.0" fill="#abadae" stroke="none" stroke-width="1" fill-opacity="0.9" stroke-linejoin="round" /><polyline points="1457.0,599.0 1560.0,652.0 1560.0,741.0" fill="none" stroke="#5a5d60" stroke-width="1" stroke-opacity="1" stroke-linejoin="round" /><polyline points="1451.0,714.0 1545.0,657.0 1552.0,661.0" fill="none" stroke="#5a5d60" stroke-width="1" stroke-opacity="1" stroke-linejoin="round" /><polyline points="1457.0,606.0 1550.0,654.0" fill="none" stroke="#d0d0d0" stroke-width="1.5" stroke-opacity="1" stroke-linejoin="round" /><polygon points="1554.0,660.0 1560.0,652.0 1560.0,741.0 1554.0,745.0" fill="#c9c9c9" stroke="none" stroke-width="1" fill-opacity="1" stroke-linejoin="round" /><polyline points="1451.0,437.0 1451.0,714.0" fill="none" stroke="#5a5d60" stroke-width="0.9" stroke-opacity="1" stroke-linejoin="round" /><polygon points="1426.0,449.0 1459.0,432.0 1486.0,451.0 1486.0,463.0 1452.0,483.0 1426.0,497.0" fill="#a5abaf" stroke="none" stroke-width="1" fill-opacity="1" stroke-linejoin="round" /><polyline points="1426.0,449.0 1459.0,432.0 1486.0,451.0 1486.0,463.0 1452.0,483.0 1426.0,497.0 1426.0,449.0" fill="none" stroke="#5a5d60" stroke-width="0.9" stroke-opacity="1" stroke-linejoin="round" /><polyline points="1426.0,484.0 1452.0,470.0 1486.0,451.0" fill="none" stroke="#5a5d60" stroke-width="0.8" stroke-opacity="1" stroke-linejoin="round" /><polyline points="1428.0,472.0 1448.0,462.0 1436.0,455.0 1428.0,460.0" fill="none" stroke="#5a5d60" stroke-width="0.8" stroke-opacity="1" stroke-linejoin="round" /><polygon points="1451.0,493.0 1486.0,513.0 1486.0,524.0 1451.0,545.0" fill="#9ca2a6" stroke="none" stroke-width="1" fill-opacity="1" stroke-linejoin="round" /><polygon points="1451.0,493.0 1486.0,513.0 1451.0,533.0" fill="#a7adb1" stroke="none" stroke-width="1" fill-opacity="1" stroke-linejoin="round" /><polyline points="1451.0,493.0 1486.0,513.0 1486.0,524.0 1451.0,545.0" fill="none" stroke="#5a5d60" stroke-width="0.9" stroke-opacity="1" stroke-linejoin="round" /><polyline points="1451.0,533.0 1486.0,513.0" fill="none" stroke="#5a5d60" stroke-width="0.7" stroke-opacity="1" stroke-linejoin="round" /><polygon points="1451.0,553.0 1486.0,573.0 1486.0,584.0 1451.0,605.0" fill="#9ca2a6" stroke="none" stroke-width="1" fill-opacity="1" stroke-linejoin="round" /><polygon points="1451.0,553.0 1486.0,573.0 1451.0,593.0" fill="#a7adb1" stroke="none" stroke-width="1" fill-opacity="1" stroke-linejoin="round" /><polyline points="1451.0,553.0 1486.0,573.0 1486.0,584.0 1451.0,605.0" fill="none" stroke="#5a5d60" stroke-width="0.9" stroke-opacity="1" stroke-linejoin="round" /><polyline points="1451.0,593.0 1486.0,573.0" fill="none" stroke="#5a5d60" stroke-width="0.7" stroke-opacity="1" stroke-linejoin="round" /><polygon points="1451.0,617.0 1486.0,637.0 1486.0,648.0 1451.0,669.0" fill="#878e92" stroke="none" stroke-width="1" fill-opacity="1" stroke-linejoin="round" /><polygon points="1451.0,617.0 1486.0,637.0 1451.0,657.0" fill="#8f969a" stroke="none" stroke-width="1" fill-opacity="1" stroke-linejoin="round" /><polyline points="1451.0,617.0 1486.0,637.0 1486.0,648.0 1451.0,669.0" fill="none" stroke="#5a5d60" stroke-width="0.9" stroke-opacity="1" stroke-linejoin="round" /><polyline points="1451.0,657.0 1486.0,637.0" fill="none" stroke="#5a5d60" stroke-width="0.7" stroke-opacity="1" stroke-linejoin="round" /><polygon points="950.0,481.0 978.0,497.2 978.0,527.2 950.0,511.0" fill="#b4b4b4" stroke="#5c5c5c" stroke-width="0.9" fill-opacity="1" stroke-linejoin="round" /><polygon points="950.0,481.0 953.0,483.0 953.0,508.5 950.0,511.0" fill="#c2c2c2" stroke="#6a6a6a" stroke-width="0.6" fill-opacity="1" stroke-linejoin="round" /><polygon points="950.0,511.0 953.0,508.5 978.0,524.2 978.0,527.2" fill="#a0a0a0" stroke="#5c5c5c" stroke-width="0.8" fill-opacity="1" stroke-linejoin="round" /><polygon points="995.5,503.0 1030.5,523.3 1030.5,583.3 995.5,563.0" fill="#ababab" stroke="#5c5c5c" stroke-width="0.9" fill-opacity="1" stroke-linejoin="round" /><polyline points="998.5,506.0 998.5,563.0" fill="none" stroke="#8a8a8a" stroke-width="1.5" stroke-opacity="1" stroke-linejoin="round" /><polygon points="950.0,543.0 978.0,559.2 978.0,589.2 950.0,573.0" fill="#b4b4b4" stroke="#5c5c5c" stroke-width="0.9" fill-opacity="1" stroke-linejoin="round" /><polygon points="950.0,543.0 953.0,545.0 953.0,570.5 950.0,573.0" fill="#c2c2c2" stroke="#6a6a6a" stroke-width="0.6" fill-opacity="1" stroke-linejoin="round" /><polygon points="950.0,573.0 953.0,570.5 978.0,586.2 978.0,589.2" fill="#a0a0a0" stroke="#5c5c5c" stroke-width="0.8" fill-opacity="1" stroke-linejoin="round" /><polygon points="995.5,565.0 1030.5,585.3 1030.5,645.3 995.5,625.0" fill="#ababab" stroke="#5c5c5c" stroke-width="0.9" fill-opacity="1" stroke-linejoin="round" /><polyline points="998.5,568.0 998.5,625.0" fill="none" stroke="#8a8a8a" stroke-width="1.5" stroke-opacity="1" stroke-linejoin="round" /><polygon points="950.0,605.0 978.0,621.2 978.0,651.2 950.0,635.0" fill="#b4b4b4" stroke="#5c5c5c" stroke-width="0.9" fill-opacity="1" stroke-linejoin="round" /><polygon points="950.0,605.0 953.0,607.0 953.0,632.5 950.0,635.0" fill="#c2c2c2" stroke="#6a6a6a" stroke-width="0.6" fill-opacity="1" stroke-linejoin="round" /><polygon points="950.0,635.0 953.0,632.5 978.0,648.2 978.0,651.2" fill="#a0a0a0" stroke="#5c5c5c" stroke-width="0.8" fill-opacity="1" stroke-linejoin="round" /><polygon points="995.5,627.0 1030.5,647.3 1030.5,707.3 995.5,687.0" fill="#ababab" stroke="#5c5c5c" stroke-width="0.9" fill-opacity="1" stroke-linejoin="round" /><polyline points="998.5,630.0 998.5,687.0" fill="none" stroke="#8a8a8a" stroke-width="1.5" stroke-opacity="1" stroke-linejoin="round" /><polygon points="950.0,667.0 978.0,683.2 978.0,713.2 950.0,697.0" fill="#b4b4b4" stroke="#5c5c5c" stroke-width="0.9" fill-opacity="1" stroke-linejoin="round" /><polygon points="950.0,667.0 953.0,669.0 953.0,694.5 950.0,697.0" fill="#c2c2c2" stroke="#6a6a6a" stroke-width="0.6" fill-opacity="1" stroke-linejoin="round" /><polygon points="950.0,697.0 953.0,694.5 978.0,710.2 978.0,713.2" fill="#a0a0a0" stroke="#5c5c5c" stroke-width="0.8" fill-opacity="1" stroke-linejoin="round" /><polygon points="995.5,689.0 1030.5,709.3 1030.5,769.3 995.5,749.0" fill="#ababab" stroke="#5c5c5c" stroke-width="0.9" fill-opacity="1" stroke-linejoin="round" /><polyline points="998.5,692.0 998.5,749.0" fill="none" stroke="#8a8a8a" stroke-width="1.5" stroke-opacity="1" stroke-linejoin="round" /><polygon points="1053.0,540.0 1080.0,555.7 1080.0,585.7 1053.0,570.0" fill="#b4b4b4" stroke="#5c5c5c" stroke-width="0.9" fill-opacity="1" stroke-linejoin="round" /><polygon points="1053.0,540.0 1056.0,542.0 1056.0,567.5 1053.0,570.0" fill="#c2c2c2" stroke="#6a6a6a" stroke-width="0.6" fill-opacity="1" stroke-linejoin="round" /><polygon points="1053.0,570.0 1056.0,567.5 1080.0,582.7 1080.0,585.7" fill="#a0a0a0" stroke="#5c5c5c" stroke-width="0.8" fill-opacity="1" stroke-linejoin="round" /><polygon points="1102.0,565.0 1138.0,585.9 1138.0,645.9 1102.0,625.0" fill="#ababab" stroke="#5c5c5c" stroke-width="0.9" fill-opacity="1" stroke-linejoin="round" /><polyline points="1105.0,568.0 1105.0,625.0" fill="none" stroke="#8a8a8a" stroke-width="1.5" stroke-opacity="1" stroke-linejoin="round" /><polygon points="1053.0,602.0 1080.0,617.7 1080.0,647.7 1053.0,632.0" fill="#b4b4b4" stroke="#5c5c5c" stroke-width="0.9" fill-opacity="1" stroke-linejoin="round" /><polygon points="1053.0,602.0 1056.0,604.0 1056.0,629.5 1053.0,632.0" fill="#c2c2c2" stroke="#6a6a6a" stroke-width="0.6" fill-opacity="1" stroke-linejoin="round" /><polygon points="1053.0,632.0 1056.0,629.5 1080.0,644.7 1080.0,647.7" fill="#a0a0a0" stroke="#5c5c5c" stroke-width="0.8" fill-opacity="1" stroke-linejoin="round" /><polygon points="1102.0,627.0 1138.0,647.9 1138.0,707.9 1102.0,687.0" fill="#ababab" stroke="#5c5c5c" stroke-width="0.9" fill-opacity="1" stroke-linejoin="round" /><polyline points="1105.0,630.0 1105.0,687.0" fill="none" stroke="#8a8a8a" stroke-width="1.5" stroke-opacity="1" stroke-linejoin="round" /><polygon points="1053.0,664.0 1080.0,679.7 1080.0,709.7 1053.0,694.0" fill="#b4b4b4" stroke="#5c5c5c" stroke-width="0.9" fill-opacity="1" stroke-linejoin="round" /><polygon points="1053.0,664.0 1056.0,666.0 1056.0,691.5 1053.0,694.0" fill="#c2c2c2" stroke="#6a6a6a" stroke-width="0.6" fill-opacity="1" stroke-linejoin="round" /><polygon points="1053.0,694.0 1056.0,691.5 1080.0,706.7 1080.0,709.7" fill="#a0a0a0" stroke="#5c5c5c" stroke-width="0.8" fill-opacity="1" stroke-linejoin="round" /><polygon points="1102.0,689.0 1138.0,709.9 1138.0,769.9 1102.0,749.0" fill="#ababab" stroke="#5c5c5c" stroke-width="0.9" fill-opacity="1" stroke-linejoin="round" /><polyline points="1105.0,692.0 1105.0,749.0" fill="none" stroke="#8a8a8a" stroke-width="1.5" stroke-opacity="1" stroke-linejoin="round" /><polygon points="1053.0,726.0 1080.0,741.7 1080.0,771.7 1053.0,756.0" fill="#b4b4b4" stroke="#5c5c5c" stroke-width="0.9" fill-opacity="1" stroke-linejoin="round" /><polygon points="1053.0,726.0 1056.0,728.0 1056.0,753.5 1053.0,756.0" fill="#c2c2c2" stroke="#6a6a6a" stroke-width="0.6" fill-opacity="1" stroke-linejoin="round" /><polygon points="1053.0,756.0 1056.0,753.5 1080.0,768.7 1080.0,771.7" fill="#a0a0a0" stroke="#5c5c5c" stroke-width="0.8" fill-opacity="1" stroke-linejoin="round" /><polygon points="1102.0,751.0 1138.0,771.9 1138.0,831.9 1102.0,811.0" fill="#ababab" stroke="#5c5c5c" stroke-width="0.9" fill-opacity="1" stroke-linejoin="round" /><polyline points="1105.0,754.0 1105.0,811.0" fill="none" stroke="#8a8a8a" stroke-width="1.5" stroke-opacity="1" stroke-linejoin="round" /><polygon points="1156.0,599.0 1182.0,614.1 1182.0,644.1 1156.0,629.0" fill="#b4b4b4" stroke="#5c5c5c" stroke-width="0.9" fill-opacity="1" stroke-linejoin="round" /><polygon points="1156.0,599.0 1159.0,601.0 1159.0,626.5 1156.0,629.0" fill="#c2c2c2" stroke="#6a6a6a" stroke-width="0.6" fill-opacity="1" stroke-linejoin="round" /><polygon points="1156.0,629.0 1159.0,626.5 1182.0,641.1 1182.0,644.1" fill="#a0a0a0" stroke="#5c5c5c" stroke-width="0.8" fill-opacity="1" stroke-linejoin="round" /><polygon points="1156.0,661.0 1182.0,676.1 1182.0,706.1 1156.0,691.0" fill="#b4b4b4" stroke="#5c5c5c" stroke-width="0.9" fill-opacity="1" stroke-linejoin="round" /><polygon points="1156.0,661.0 1159.0,663.0 1159.0,688.5 1156.0,691.0" fill="#c2c2c2" stroke="#6a6a6a" stroke-width="0.6" fill-opacity="1" stroke-linejoin="round" /><polygon points="1156.0,691.0 1159.0,688.5 1182.0,703.1 1182.0,706.1" fill="#a0a0a0" stroke="#5c5c5c" stroke-width="0.8" fill-opacity="1" stroke-linejoin="round" /><polygon points="1156.0,723.0 1182.0,738.1 1182.0,768.1 1156.0,753.0" fill="#b4b4b4" stroke="#5c5c5c" stroke-width="0.9" fill-opacity="1" stroke-linejoin="round" /><polygon points="1156.0,723.0 1159.0,725.0 1159.0,750.5 1156.0,753.0" fill="#c2c2c2" stroke="#6a6a6a" stroke-width="0.6" fill-opacity="1" stroke-linejoin="round" /><polygon points="1156.0,753.0 1159.0,750.5 1182.0,765.1 1182.0,768.1" fill="#a0a0a0" stroke="#5c5c5c" stroke-width="0.8" fill-opacity="1" stroke-linejoin="round" /><polygon points="1156.0,785.0 1182.0,800.1 1182.0,830.1 1156.0,815.0" fill="#b4b4b4" stroke="#5c5c5c" stroke-width="0.9" fill-opacity="1" stroke-linejoin="round" /><polygon points="1156.0,785.0 1159.0,787.0 1159.0,812.5 1156.0,815.0" fill="#c2c2c2" stroke="#6a6a6a" stroke-width="0.6" fill-opacity="1" stroke-linejoin="round" /><polygon points="1156.0,815.0 1159.0,812.5 1182.0,827.1 1182.0,830.1" fill="#a0a0a0" stroke="#5c5c5c" stroke-width="0.8" fill-opacity="1" stroke-linejoin="round" /><polygon points="1055.0,809.5 1076.4,820.0 1076.4,863.4 1055.0,852.0" fill="#b9b9b9" stroke="#555" stroke-width="0.9" fill-opacity="1" stroke-linejoin="round" /><polygon points="1055.0,809.5 1060.0,812.0 1060.0,854.5 1055.0,852.0" fill="#8f8f8f" stroke="#555" stroke-width="0.6" fill-opacity="1" stroke-linejoin="round" /><polyline points="1061.0,816.0 1074.0,823.0 1074.0,862.0" fill="none" stroke="#777" stroke-width="0.7" stroke-opacity="1" stroke-linejoin="round" /><polygon points="1095.0,826.4 1144.4,851.0 1144.4,901.8 1095.0,874.0" fill="#b6b6b6" stroke="#555" stroke-width="0.9" fill-opacity="1" stroke-linejoin="round" /><polygon points="1100.0,832.0 1131.6,847.2 1101.0,863.4" fill="#aba7a3" stroke="none" stroke-width="1" fill-opacity="1" stroke-linejoin="round" /><polyline points="1101.0,863.4 1131.6,847.2" fill="none" stroke="#555" stroke-width="0.9" stroke-opacity="1" stroke-linejoin="round" /><polygon points="1095.0,826.4 1100.0,829.0 1100.0,876.5 1095.0,874.0" fill="#8f8f8f" stroke="#555" stroke-width="0.6" fill-opacity="1" stroke-linejoin="round" /><polyline points="1142.0,852.0 1142.0,900.0" fill="none" stroke="#777" stroke-width="0.7" stroke-opacity="1" stroke-linejoin="round" /><polyline points="1058.0,806.0 1078.0,817.0 1080.0,866.0" fill="none" stroke="#b08a70" stroke-width="0.8" stroke-opacity="0.5" stroke-linejoin="round" /><polyline points="1098.0,823.0 1146.0,848.0 1148.0,905.0" fill="none" stroke="#b08a70" stroke-width="0.8" stroke-opacity="0.5" stroke-linejoin="round" /><polygon points="929.6,518.5 1030.6,581.1 1030.6,592.2 929.6,530.1" fill="#9a9c9e" stroke="none" stroke-width="1" fill-opacity="1" stroke-linejoin="round" /><polygon points="936.3,512.8 1043.6,573.8 1030.6,581.1 929.6,518.5" fill="#a4a7a9" stroke="none" stroke-width="1" fill-opacity="1" stroke-linejoin="round" /><polygon points="1030.6,581.1 1043.6,573.8 1043.6,583.9 1030.6,592.2" fill="#9fa2a4" stroke="none" stroke-width="1" fill-opacity="1" stroke-linejoin="round" /><polyline points="929.6,530.1 929.6,518.5 936.3,512.8 1043.6,573.8 1043.6,583.9 1030.6,592.2 929.6,530.1" fill="none" stroke="#4f5254" stroke-width="1.1" stroke-opacity="1" stroke-linejoin="round" /><polyline points="929.6,518.5 1030.6,581.1 1043.6,573.8" fill="none" stroke="#4f5254" stroke-width="1.1" stroke-opacity="1" stroke-linejoin="round" /><polyline points="1030.6,581.1 1030.6,592.2" fill="none" stroke="#4f5254" stroke-width="0.9" stroke-opacity="1" stroke-linejoin="round" /><polygon points="929.6,580.5 1030.6,643.1 1030.6,654.2 929.6,592.1" fill="#9a9c9e" stroke="none" stroke-width="1" fill-opacity="1" stroke-linejoin="round" /><polygon points="936.3,574.8 1043.6,635.8 1030.6,643.1 929.6,580.5" fill="#a4a7a9" stroke="none" stroke-width="1" fill-opacity="1" stroke-linejoin="round" /><polygon points="1030.6,643.1 1043.6,635.8 1043.6,645.9 1030.6,654.2" fill="#9fa2a4" stroke="none" stroke-width="1" fill-opacity="1" stroke-linejoin="round" /><polyline points="929.6,592.1 929.6,580.5 936.3,574.8 1043.6,635.8 1043.6,645.9 1030.6,654.2 929.6,592.1" fill="none" stroke="#4f5254" stroke-width="1.1" stroke-opacity="1" stroke-linejoin="round" /><polyline points="929.6,580.5 1030.6,643.1 1043.6,635.8" fill="none" stroke="#4f5254" stroke-width="1.1" stroke-opacity="1" stroke-linejoin="round" /><polyline points="1030.6,643.1 1030.6,654.2" fill="none" stroke="#4f5254" stroke-width="0.9" stroke-opacity="1" stroke-linejoin="round" /><polygon points="929.6,642.5 1030.6,705.1 1030.6,716.2 929.6,654.1" fill="#9a9c9e" stroke="none" stroke-width="1" fill-opacity="1" stroke-linejoin="round" /><polygon points="936.3,636.8 1043.6,697.8 1030.6,705.1 929.6,642.5" fill="#a4a7a9" stroke="none" stroke-width="1" fill-opacity="1" stroke-linejoin="round" /><polygon points="1030.6,705.1 1043.6,697.8 1043.6,707.9 1030.6,716.2" fill="#9fa2a4" stroke="none" stroke-width="1" fill-opacity="1" stroke-linejoin="round" /><polyline points="929.6,654.1 929.6,642.5 936.3,636.8 1043.6,697.8 1043.6,707.9 1030.6,716.2 929.6,654.1" fill="none" stroke="#4f5254" stroke-width="1.1" stroke-opacity="1" stroke-linejoin="round" /><polyline points="929.6,642.5 1030.6,705.1 1043.6,697.8" fill="none" stroke="#4f5254" stroke-width="1.1" stroke-opacity="1" stroke-linejoin="round" /><polyline points="1030.6,705.1 1030.6,716.2" fill="none" stroke="#4f5254" stroke-width="0.9" stroke-opacity="1" stroke-linejoin="round" /><polygon points="929.6,704.5 1030.6,767.1 1030.6,778.2 929.6,716.1" fill="#9a9c9e" stroke="none" stroke-width="1" fill-opacity="1" stroke-linejoin="round" /><polygon points="936.3,698.8 1043.6,759.8 1030.6,767.1 929.6,704.5" fill="#a4a7a9" stroke="none" stroke-width="1" fill-opacity="1" stroke-linejoin="round" /><polygon points="1030.6,767.1 1043.6,759.8 1043.6,769.9 1030.6,778.2" fill="#9fa2a4" stroke="none" stroke-width="1" fill-opacity="1" stroke-linejoin="round" /><polyline points="929.6,716.1 929.6,704.5 936.3,698.8 1043.6,759.8 1043.6,769.9 1030.6,778.2 929.6,716.1" fill="none" stroke="#4f5254" stroke-width="1.1" stroke-opacity="1" stroke-linejoin="round" /><polyline points="929.6,704.5 1030.6,767.1 1043.6,759.8" fill="none" stroke="#4f5254" stroke-width="1.1" stroke-opacity="1" stroke-linejoin="round" /><polyline points="1030.6,767.1 1030.6,778.2" fill="none" stroke="#4f5254" stroke-width="0.9" stroke-opacity="1" stroke-linejoin="round" /><polygon points="1075.0,607.0 1186.4,665.0 1186.4,676.1 1075.0,618.6" fill="#9a9c9e" stroke="none" stroke-width="1" fill-opacity="1" stroke-linejoin="round" /><polygon points="1088.0,599.4 1194.6,661.0 1186.4,665.0 1075.0,607.0" fill="#a4a7a9" stroke="none" stroke-width="1" fill-opacity="1" stroke-linejoin="round" /><polygon points="1186.4,665.0 1194.6,661.0 1194.6,671.1 1186.4,676.1" fill="#9fa2a4" stroke="none" stroke-width="1" fill-opacity="1" stroke-linejoin="round" /><polyline points="1075.0,618.6 1075.0,607.0 1088.0,599.4 1194.6,661.0 1194.6,671.1 1186.4,676.1 1075.0,618.6" fill="none" stroke="#4f5254" stroke-width="1.1" stroke-opacity="1" stroke-linejoin="round" /><polyline points="1075.0,607.0 1186.4,665.0 1194.6,661.0" fill="none" stroke="#4f5254" stroke-width="1.1" stroke-opacity="1" stroke-linejoin="round" /><polyline points="1186.4,665.0 1186.4,676.1" fill="none" stroke="#4f5254" stroke-width="0.9" stroke-opacity="1" stroke-linejoin="round" /><polygon points="1075.0,669.0 1186.4,727.0 1186.4,738.1 1075.0,680.6" fill="#9a9c9e" stroke="none" stroke-width="1" fill-opacity="1" stroke-linejoin="round" /><polygon points="1088.0,661.4 1194.6,723.0 1186.4,727.0 1075.0,669.0" fill="#a4a7a9" stroke="none" stroke-width="1" fill-opacity="1" stroke-linejoin="round" /><polygon points="1186.4,727.0 1194.6,723.0 1194.6,733.1 1186.4,738.1" fill="#9fa2a4" stroke="none" stroke-width="1" fill-opacity="1" stroke-linejoin="round" /><polyline points="1075.0,680.6 1075.0,669.0 1088.0,661.4 1194.6,723.0 1194.6,733.1 1186.4,738.1 1075.0,680.6" fill="none" stroke="#4f5254" stroke-width="1.1" stroke-opacity="1" stroke-linejoin="round" /><polyline points="1075.0,669.0 1186.4,727.0 1194.6,723.0" fill="none" stroke="#4f5254" stroke-width="1.1" stroke-opacity="1" stroke-linejoin="round" /><polyline points="1186.4,727.0 1186.4,738.1" fill="none" stroke="#4f5254" stroke-width="0.9" stroke-opacity="1" stroke-linejoin="round" /><polygon points="1075.0,731.0 1186.4,789.0 1186.4,800.1 1075.0,742.6" fill="#9a9c9e" stroke="none" stroke-width="1" fill-opacity="1" stroke-linejoin="round" /><polygon points="1088.0,723.4 1194.6,785.0 1186.4,789.0 1075.0,731.0" fill="#a4a7a9" stroke="none" stroke-width="1" fill-opacity="1" stroke-linejoin="round" /><polygon points="1186.4,789.0 1194.6,785.0 1194.6,795.1 1186.4,800.1" fill="#9fa2a4" stroke="none" stroke-width="1" fill-opacity="1" stroke-linejoin="round" /><polyline points="1075.0,742.6 1075.0,731.0 1088.0,723.4 1194.6,785.0 1194.6,795.1 1186.4,800.1 1075.0,742.6" fill="none" stroke="#4f5254" stroke-width="1.1" stroke-opacity="1" stroke-linejoin="round" /><polyline points="1075.0,731.0 1186.4,789.0 1194.6,785.0" fill="none" stroke="#4f5254" stroke-width="1.1" stroke-opacity="1" stroke-linejoin="round" /><polyline points="1186.4,789.0 1186.4,800.1" fill="none" stroke="#4f5254" stroke-width="0.9" stroke-opacity="1" stroke-linejoin="round" /><polygon points="1075.0,793.0 1186.4,851.0 1186.4,862.1 1075.0,804.6" fill="#9a9c9e" stroke="none" stroke-width="1" fill-opacity="1" stroke-linejoin="round" /><polygon points="1088.0,785.4 1194.6,847.0 1186.4,851.0 1075.0,793.0" fill="#a4a7a9" stroke="none" stroke-width="1" fill-opacity="1" stroke-linejoin="round" /><polygon points="1186.4,851.0 1194.6,847.0 1194.6,857.1 1186.4,862.1" fill="#9fa2a4" stroke="none" stroke-width="1" fill-opacity="1" stroke-linejoin="round" /><polyline points="1075.0,804.6 1075.0,793.0 1088.0,785.4 1194.6,847.0 1194.6,857.1 1186.4,862.1 1075.0,804.6" fill="none" stroke="#4f5254" stroke-width="1.1" stroke-opacity="1" stroke-linejoin="round" /><polyline points="1075.0,793.0 1186.4,851.0 1194.6,847.0" fill="none" stroke="#4f5254" stroke-width="1.1" stroke-opacity="1" stroke-linejoin="round" /><polyline points="1186.4,851.0 1186.4,862.1" fill="none" stroke="#4f5254" stroke-width="0.9" stroke-opacity="1" stroke-linejoin="round" /><defs><linearGradient id="rga" x1="0" y1="0" x2="0.3" y2="1"><stop offset="0" stop-color="#93999d"/><stop offset="0.5" stop-color="#96999c"/><stop offset="1" stop-color="#a6a4a2"/></linearGradient><linearGradient id="rgb" x1="0" y1="0" x2="0" y2="1"><stop offset="0" stop-color="#969ca0"/><stop offset="1" stop-color="#8f9599"/></linearGradient></defs><polygon points="892.0,418.0 1211.0,605.0 1363.0,467.0 1460.0,425.0 1460.0,435.0 1363.0,477.0 1211.0,614.0 892.0,430.0" fill="#959a9d" stroke="none" stroke-width="1" fill-opacity="1" stroke-linejoin="round" /><polygon points="892.0,418.0 1044.0,280.0 1363.0,467.0 1211.0,605.0" fill="url(#rga)" stroke="none" stroke-width="1" fill-opacity="1" stroke-linejoin="round" /><polygon points="1044.0,280.0 1140.0,240.0 1460.0,425.0 1363.0,467.0" fill="url(#rgb)" stroke="none" stroke-width="1" fill-opacity="1" stroke-linejoin="round" /><defs><clipPath id="cpA"><polygon points="892,418 1044,280 1363,467 1211,605"/></clipPath><filter id="bl6" x="-20%" y="-20%" width="140%" height="140%"><feGaussianBlur stdDeviation="6"/></filter></defs><g clip-path="url(#cpA)"><g filter="url(#bl6)"><polygon points="928,435 1127,333 1230,392 1020,520 930,470" fill="#8d9194" fill-opacity="0.85"/><polygon points="1020,530 1230,400 1330,460 1211,590 1120,560" fill="#a5a3a1" fill-opacity="0.7"/></g></g><polygon points="892.0,418.0 1044.0,280.0 1062.0,291.0 923.0,423.0" fill="#a6acb0" stroke="none" stroke-width="1" fill-opacity="1" stroke-linejoin="round" /><polygon points="923.0,423.0 1062.0,291.0 1127.0,329.0 928.0,431.0" fill="#9ca1a5" stroke="none" stroke-width="1" fill-opacity="1" stroke-linejoin="round" /><polygon points="1037.0,330.0 1075.0,330.0 1075.0,560.0 1037.0,560.0" fill="#a3a3a3" stroke="none" stroke-width="1" fill-opacity="0.35" stroke-linejoin="round" /><polygon points="1150.0,362.1 1180.0,379.7 1180.0,560.0 1150.0,560.0" fill="#a8a6a4" stroke="none" stroke-width="1" fill-opacity="0.3" stroke-linejoin="round" /><polygon points="1220.0,403.1 1245.0,417.8 1245.0,560.0 1220.0,560.0" fill="#a9a7a5" stroke="none" stroke-width="1" fill-opacity="0.3" stroke-linejoin="round" /><polygon points="985.0,330.0 1005.0,330.0 1005.0,560.0 985.0,560.0" fill="#9a9a9a" stroke="none" stroke-width="1" fill-opacity="0.25" stroke-linejoin="round" /><polygon points="1044.0,280.0 1140.0,240.0 1460.0,425.0 1440.0,432.0 1139.0,266.0 1071.0,293.0" fill="#a1a7ab" stroke="none" stroke-width="1" fill-opacity="0.9" stroke-linejoin="round" /><polygon points="1135.0,320.0 1199.0,285.0 1300.0,345.0 1300.0,360.0 1235.0,392.0 1136.0,332.0" fill="#838a8e" stroke="none" stroke-width="1" fill-opacity="0.8" stroke-linejoin="round" /><polygon points="1260.0,400.0 1440.0,432.0 1460.0,435.0 1363.0,477.0" fill="#8d9397" stroke="none" stroke-width="1" fill-opacity="0.5" stroke-linejoin="round" /><polygon points="1044.0,280.0 1363.0,467.0 1363.0,474.0 1044.0,290.0" fill="#7d8488" stroke="none" stroke-width="1" fill-opacity="0.85" stroke-linejoin="round" /><polyline points="892.0,418.0 1044.0,280.0 1140.0,240.0 1460.0,425.0 1460.0,435.0" fill="none" stroke="#55595c" stroke-width="1.1" stroke-opacity="1" stroke-linejoin="round" /><polyline points="892.0,418.0 1211.0,605.0 1363.0,467.0 1460.0,425.0" fill="none" stroke="#6a6e71" stroke-width="0.9" stroke-opacity="1" stroke-linejoin="round" /><polyline points="892.0,430.0 1211.0,614.0 1363.0,477.0 1460.0,435.0" fill="none" stroke="#4f5356" stroke-width="1.2" stroke-opacity="1" stroke-linejoin="round" /><polyline points="892.0,418.0 892.0,430.0" fill="none" stroke="#5b5f62" stroke-width="1" stroke-opacity="1" stroke-linejoin="round" /><polyline points="1211.0,605.0 1211.0,614.0" fill="none" stroke="#5b5f62" stroke-width="1" stroke-opacity="1" stroke-linejoin="round" /><polyline points="1044.0,280.0 1044.0,290.0" fill="none" stroke="#5b5f62" stroke-width="0.8" stroke-opacity="1" stroke-linejoin="round" /><polygon points="976.0,392.5 1000.0,370.5 1014.5,379.5 990.0,401.0" fill="#b0b3b5" stroke="#3f4245" stroke-width="1.1" fill-opacity="0.6" stroke-linejoin="round" /><polygon points="1056.0,437.5 1080.0,415.5 1094.5,424.5 1070.0,446.0" fill="#a3a5a6" stroke="#3f4245" stroke-width="1.1" fill-opacity="0.6" stroke-linejoin="round" /><polygon points="1137.5,483.7 1161.5,461.7 1176.0,470.7 1151.5,492.2" fill="#a3a5a6" stroke="#3f4245" stroke-width="1.1" fill-opacity="0.6" stroke-linejoin="round" /><polygon points="1215.0,530.0 1239.0,508.0 1253.5,517.0 1229.0,538.5" fill="#a3a5a6" stroke="#3f4245" stroke-width="1.1" fill-opacity="0.6" stroke-linejoin="round" /><polygon points="983.0,393.0 1002.0,376.0 1010.0,381.0 991.0,398.0" fill="#d8d8d8" stroke="none" stroke-width="1" fill-opacity="1" stroke-linejoin="round" /><polyline points="1081.0,450.0 1081.0,368.0 1146.0,400.0 1190.0,425.0" fill="none" stroke="#c8383c" stroke-width="1.3" stroke-opacity="0.85" stroke-linejoin="round" /><polyline points="1113.0,380.0 1113.0,364.0 1081.0,385.0" fill="none" stroke="#c8383c" stroke-width="1.3" stroke-opacity="0.85" stroke-linejoin="round" /><polyline points="1082.0,407.0 1095.0,403.0 1120.0,414.0 1145.0,400.0" fill="none" stroke="#c8383c" stroke-width="1.3" stroke-opacity="0.85" stroke-linejoin="round" /><polyline points="1108.0,460.0 1108.0,425.0 1120.0,414.0" fill="none" stroke="#c8383c" stroke-width="1.3" stroke-opacity="0.85" stroke-linejoin="round" /><polyline points="1084.0,372.0 1084.0,440.0" fill="none" stroke="#3a4fd8" stroke-width="0.8" stroke-opacity="0.6" stroke-linejoin="round" /><polyline points="1090.0,395.0 1130.0,378.0 1150.0,388.0" fill="none" stroke="#3a4fd8" stroke-width="0.7" stroke-opacity="0.5" stroke-linejoin="round" /><polyline points="1012.0,470.0 1030.0,462.0 1048.0,472.0 1060.0,466.0" fill="none" stroke="#c8383c" stroke-width="1.1" stroke-opacity="0.75" stroke-linejoin="round" /><polyline points="1030.0,462.0 1030.0,490.0" fill="none" stroke="#c8383c" stroke-width="1.0" stroke-opacity="0.6" stroke-linejoin="round" /><polyline points="1045.0,458.0 1045.0,485.0" fill="none" stroke="#c8383c" stroke-width="0.9" stroke-opacity="0.55" stroke-linejoin="round" /><polyline points="1016.0,468.0 1034.0,459.0 1052.0,468.0" fill="none" stroke="#3a4fd8" stroke-width="0.8" stroke-opacity="0.6" stroke-linejoin="round" /><polyline points="1020.0,465.0 1020.0,492.0" fill="none" stroke="#3a4fd8" stroke-width="0.8" stroke-opacity="0.5" stroke-linejoin="round" /><polyline points="1000.0,480.0 1060.0,455.0 1080.0,465.0" fill="none" stroke="#3a4fd8" stroke-width="0.7" stroke-opacity="0.4" stroke-linejoin="round" /><polyline points="1266.0,494.0 1290.0,508.0" fill="none" stroke="#c8383c" stroke-width="1.3" stroke-opacity="0.8" stroke-linejoin="round" /><polyline points="1268.0,510.0 1290.0,496.0" fill="none" stroke="#c8383c" stroke-width="1.3" stroke-opacity="0.8" stroke-linejoin="round" /><polyline points="1272.0,492.0 1272.0,560.0" fill="none" stroke="#c8383c" stroke-width="1.2" stroke-opacity="0.6" stroke-linejoin="round" /><polyline points="1266.0,498.0 1266.0,550.0" fill="none" stroke="#c8383c" stroke-width="1.0" stroke-opacity="0.5" stroke-linejoin="round" /><polyline points="1278.0,492.0 1278.0,555.0" fill="none" stroke="#3a4fd8" stroke-width="1.0" stroke-opacity="0.6" stroke-linejoin="round" /><polyline points="1284.0,496.0 1284.0,560.0" fill="none" stroke="#3a4fd8" stroke-width="0.9" stroke-opacity="0.5" stroke-linejoin="round" /><polyline points="1255.0,520.0 1300.0,500.0 1340.0,520.0" fill="none" stroke="#3a4fd8" stroke-width="0.7" stroke-opacity="0.4" stroke-linejoin="round" /><polyline points="1288.0,347.0 1307.0,359.0 1285.0,373.0 1285.0,421.0" fill="none" stroke="#c8383c" stroke-width="1.3" stroke-opacity="0.85" stroke-linejoin="round" /><polygon points="1253.0,440.0 1263.0,440.0 1263.0,458.0 1253.0,458.0" fill="#6f7477" stroke="none" stroke-width="1" fill-opacity="0.55" stroke-linejoin="round" /><polygon points="1388.0,436.0 1398.0,436.0 1398.0,452.0 1388.0,452.0" fill="#6f7477" stroke="none" stroke-width="1" fill-opacity="0.45" stroke-linejoin="round" /><polyline points="1252.0,426.0 1330.0,379.0 1334.0,376.0 1340.0,379.0 1340.0,423.0" fill="none" stroke="#c8383c" stroke-width="1.3" stroke-opacity="0.85" stroke-linejoin="round" /><polyline points="1330.0,379.0 1330.0,420.0" fill="none" stroke="#c8383c" stroke-width="1.1" stroke-opacity="0.7" stroke-linejoin="round" /><polyline points="1339.0,421.0 1378.0,399.0 1392.0,406.0 1392.0,438.0" fill="none" stroke="#3a4fd8" stroke-width="1.1" stroke-opacity="0.8" stroke-linejoin="round" /><polyline points="1252.0,423.0 1294.0,441.0 1257.0,467.0 1288.0,483.0" fill="none" stroke="#c8383c" stroke-width="1.3" stroke-opacity="0.85" stroke-linejoin="round" /><polyline points="1343.0,410.0 1366.0,398.0 1386.0,409.0 1386.0,435.0" fill="none" stroke="#c8383c" stroke-width="1.3" stroke-opacity="0.85" stroke-linejoin="round" /><polyline points="1257.0,467.0 1260.0,520.0" fill="none" stroke="#c8383c" stroke-width="1.0" stroke-opacity="0.6" stroke-linejoin="round" /><polyline points="1153.0,560.0 1153.0,503.0 1197.0,476.0 1221.0,488.0 1257.0,467.0 1394.0,396.0 1394.0,438.0" fill="none" stroke="#3a4fd8" stroke-width="1.3" stroke-opacity="0.9" stroke-linejoin="round" /><polyline points="1262.0,405.0 1320.0,375.0" fill="none" stroke="#3a4fd8" stroke-width="0.8" stroke-opacity="0.6" stroke-linejoin="round" /><polyline points="1090.0,430.0 1090.0,520.0" fill="none" stroke="#c8383c" stroke-width="0.7" stroke-opacity="0.22" stroke-linejoin="round" /><polyline points="1125.0,430.0 1125.0,520.0" fill="none" stroke="#c8383c" stroke-width="0.7" stroke-opacity="0.22" stroke-linejoin="round" /><polyline points="1165.0,430.0 1165.0,520.0" fill="none" stroke="#c8383c" stroke-width="0.7" stroke-opacity="0.22" stroke-linejoin="round" /><polyline points="1200.0,430.0 1200.0,520.0" fill="none" stroke="#c8383c" stroke-width="0.7" stroke-opacity="0.22" stroke-linejoin="round" /><polyline points="1240.0,430.0 1240.0,520.0" fill="none" stroke="#c8383c" stroke-width="0.7" stroke-opacity="0.22" stroke-linejoin="round" /><polyline points="1275.0,430.0 1275.0,520.0" fill="none" stroke="#c8383c" stroke-width="0.7" stroke-opacity="0.22" stroke-linejoin="round" /><polyline points="1300.0,430.0 1300.0,520.0" fill="none" stroke="#c8383c" stroke-width="0.7" stroke-opacity="0.22" stroke-linejoin="round" /><polyline points="1330.0,430.0 1330.0,520.0" fill="none" stroke="#c8383c" stroke-width="0.7" stroke-opacity="0.22" stroke-linejoin="round" /><polyline points="1370.0,430.0 1370.0,520.0" fill="none" stroke="#c8383c" stroke-width="0.7" stroke-opacity="0.22" stroke-linejoin="round" /><polyline points="1400.0,430.0 1400.0,520.0" fill="none" stroke="#c8383c" stroke-width="0.7" stroke-opacity="0.22" stroke-linejoin="round" /><polyline points="1160.0,500.0 1160.0,620.0" fill="none" stroke="#3a4fd8" stroke-width="1" stroke-opacity="0.45" stroke-linejoin="round" /><polyline points="1155.0,520.0 1155.0,640.0" fill="none" stroke="#3a4fd8" stroke-width="0.8" stroke-opacity="0.4" stroke-linejoin="round" /><polygon points="1136.0,560.0 1147.0,565.0 1147.0,822.0 1136.0,817.0" fill="#9090d8" stroke="none" stroke-width="1" fill-opacity="0.28" stroke-linejoin="round" /><polyline points="1139.0,570.0 1139.0,815.0" fill="none" stroke="#3a4fd8" stroke-width="0.9" stroke-opacity="0.4" stroke-linejoin="round" /><polyline points="1143.0,572.0 1143.0,818.0" fill="none" stroke="#3a4fd8" stroke-width="0.9" stroke-opacity="0.4" stroke-linejoin="round" /><polyline points="1269.0,615.0 1297.0,600.0 1311.0,607.0 1311.0,658.0" fill="none" stroke="#c8383c" stroke-width="1.4" stroke-opacity="0.8" stroke-linejoin="round" /><polyline points="1269.0,615.0 1288.0,628.0 1288.0,680.0" fill="none" stroke="#c8383c" stroke-width="1.0" stroke-opacity="0.6" stroke-linejoin="round" /><polyline points="1288.0,628.0 1288.0,690.0" fill="none" stroke="#c8383c" stroke-width="1.8" stroke-opacity="0.85" stroke-linejoin="round" /><polyline points="1298.0,615.0 1298.0,662.0" fill="none" stroke="#3a4fd8" stroke-width="1.2" stroke-opacity="0.8" stroke-linejoin="round" /><polyline points="1306.0,612.0 1306.0,668.0" fill="none" stroke="#3a4fd8" stroke-width="1.0" stroke-opacity="0.6" stroke-linejoin="round" /><polyline points="1311.0,607.0 1311.0,660.0" fill="none" stroke="#c8383c" stroke-width="1.9" stroke-opacity="0.85" stroke-linejoin="round" /><polygon points="1290.0,657.0 1298.0,661.0 1302.0,665.0 1294.0,667.0 1288.0,663.0" fill="#3030e0" stroke="none" stroke-width="1" fill-opacity="0.9" stroke-linejoin="round" /><polygon points="1282.0,700.0 1290.0,703.0 1286.0,707.0 1278.0,704.0" fill="#9a78d8" stroke="none" stroke-width="1" fill-opacity="0.7" stroke-linejoin="round" /><polygon points="1300.0,714.0 1308.0,717.0 1304.0,721.0 1296.0,718.0" fill="#9a78d8" stroke="none" stroke-width="1" fill-opacity="0.7" stroke-linejoin="round" /><polyline points="1329.0,586.0 1349.0,577.0 1363.0,584.0 1363.0,628.0" fill="none" stroke="#c8383c" stroke-width="1.4" stroke-opacity="0.8" stroke-linejoin="round" /><polyline points="1363.0,584.0 1363.0,630.0" fill="none" stroke="#c8383c" stroke-width="1.9" stroke-opacity="0.85" stroke-linejoin="round" /><polyline points="1346.0,590.0 1346.0,634.0" fill="none" stroke="#c8383c" stroke-width="1.7" stroke-opacity="0.8" stroke-linejoin="round" /><polyline points="1341.0,592.0 1341.0,636.0" fill="none" stroke="#3a4fd8" stroke-width="1.2" stroke-opacity="0.8" stroke-linejoin="round" /><polyline points="1360.0,588.0 1360.0,630.0" fill="none" stroke="#3a4fd8" stroke-width="0.9" stroke-opacity="0.5" stroke-linejoin="round" /><polygon points="1336.0,630.0 1344.0,633.0 1340.0,637.0 1332.0,634.0" fill="#9a78d8" stroke="none" stroke-width="1" fill-opacity="0.7" stroke-linejoin="round" /><polygon points="1356.0,626.0 1364.0,629.0 1360.0,633.0 1352.0,630.0" fill="#9a78d8" stroke="none" stroke-width="1" fill-opacity="0.7" stroke-linejoin="round" /><polyline points="1275.0,640.0 1330.0,610.0 1345.0,618.0" fill="none" stroke="#c8383c" stroke-width="0.8" stroke-opacity="0.35" stroke-linejoin="round" /><polyline points="1272.0,650.0 1320.0,625.0" fill="none" stroke="#3a4fd8" stroke-width="0.8" stroke-opacity="0.35" stroke-linejoin="round" /><polyline points="1269.0,676.5 1297.0,661.5 1311.0,668.5 1311.0,719.5" fill="none" stroke="#c8383c" stroke-width="1.4" stroke-opacity="0.8" stroke-linejoin="round" /><polyline points="1269.0,676.5 1288.0,689.5 1288.0,741.5" fill="none" stroke="#c8383c" stroke-width="1.0" stroke-opacity="0.6" stroke-linejoin="round" /><polyline points="1288.0,689.5 1288.0,751.5" fill="none" stroke="#c8383c" stroke-width="1.8" stroke-opacity="0.85" stroke-linejoin="round" /><polyline points="1298.0,676.5 1298.0,723.5" fill="none" stroke="#3a4fd8" stroke-width="1.2" stroke-opacity="0.8" stroke-linejoin="round" /><polyline points="1306.0,673.5 1306.0,729.5" fill="none" stroke="#3a4fd8" stroke-width="1.0" stroke-opacity="0.6" stroke-linejoin="round" /><polyline points="1311.0,668.5 1311.0,721.5" fill="none" stroke="#c8383c" stroke-width="1.9" stroke-opacity="0.85" stroke-linejoin="round" /><polygon points="1290.0,718.5 1298.0,722.5 1302.0,726.5 1294.0,728.5 1288.0,724.5" fill="#3030e0" stroke="none" stroke-width="1" fill-opacity="0.9" stroke-linejoin="round" /><polygon points="1282.0,761.5 1290.0,764.5 1286.0,768.5 1278.0,765.5" fill="#9a78d8" stroke="none" stroke-width="1" fill-opacity="0.7" stroke-linejoin="round" /><polygon points="1300.0,775.5 1308.0,778.5 1304.0,782.5 1296.0,779.5" fill="#9a78d8" stroke="none" stroke-width="1" fill-opacity="0.7" stroke-linejoin="round" /><polyline points="1329.0,647.5 1349.0,638.5 1363.0,645.5 1363.0,689.5" fill="none" stroke="#c8383c" stroke-width="1.4" stroke-opacity="0.8" stroke-linejoin="round" /><polyline points="1363.0,645.5 1363.0,691.5" fill="none" stroke="#c8383c" stroke-width="1.9" stroke-opacity="0.85" stroke-linejoin="round" /><polyline points="1346.0,651.5 1346.0,695.5" fill="none" stroke="#c8383c" stroke-width="1.7" stroke-opacity="0.8" stroke-linejoin="round" /><polyline points="1341.0,653.5 1341.0,697.5" fill="none" stroke="#3a4fd8" stroke-width="1.2" stroke-opacity="0.8" stroke-linejoin="round" /><polyline points="1360.0,649.5 1360.0,691.5" fill="none" stroke="#3a4fd8" stroke-width="0.9" stroke-opacity="0.5" stroke-linejoin="round" /><polygon points="1336.0,691.5 1344.0,694.5 1340.0,698.5 1332.0,695.5" fill="#9a78d8" stroke="none" stroke-width="1" fill-opacity="0.7" stroke-linejoin="round" /><polygon points="1356.0,687.5 1364.0,690.5 1360.0,694.5 1352.0,691.5" fill="#9a78d8" stroke="none" stroke-width="1" fill-opacity="0.7" stroke-linejoin="round" /><polyline points="1275.0,701.5 1330.0,671.5 1345.0,679.5" fill="none" stroke="#c8383c" stroke-width="0.8" stroke-opacity="0.35" stroke-linejoin="round" /><polyline points="1272.0,711.5 1320.0,686.5" fill="none" stroke="#3a4fd8" stroke-width="0.8" stroke-opacity="0.35" stroke-linejoin="round" /><polyline points="1269.0,738.0 1297.0,723.0 1311.0,730.0 1311.0,781.0" fill="none" stroke="#c8383c" stroke-width="1.4" stroke-opacity="0.8" stroke-linejoin="round" /><polyline points="1269.0,738.0 1288.0,751.0 1288.0,803.0" fill="none" stroke="#c8383c" stroke-width="1.0" stroke-opacity="0.6" stroke-linejoin="round" /><polyline points="1288.0,751.0 1288.0,813.0" fill="none" stroke="#c8383c" stroke-width="1.8" stroke-opacity="0.85" stroke-linejoin="round" /><polyline points="1298.0,738.0 1298.0,785.0" fill="none" stroke="#3a4fd8" stroke-width="1.2" stroke-opacity="0.8" stroke-linejoin="round" /><polyline points="1306.0,735.0 1306.0,791.0" fill="none" stroke="#3a4fd8" stroke-width="1.0" stroke-opacity="0.6" stroke-linejoin="round" /><polyline points="1311.0,730.0 1311.0,783.0" fill="none" stroke="#c8383c" stroke-width="1.9" stroke-opacity="0.85" stroke-linejoin="round" /><polygon points="1290.0,780.0 1298.0,784.0 1302.0,788.0 1294.0,790.0 1288.0,786.0" fill="#3030e0" stroke="none" stroke-width="1" fill-opacity="0.9" stroke-linejoin="round" /><polygon points="1282.0,823.0 1290.0,826.0 1286.0,830.0 1278.0,827.0" fill="#9a78d8" stroke="none" stroke-width="1" fill-opacity="0.7" stroke-linejoin="round" /><polygon points="1300.0,837.0 1308.0,840.0 1304.0,844.0 1296.0,841.0" fill="#9a78d8" stroke="none" stroke-width="1" fill-opacity="0.7" stroke-linejoin="round" /><polyline points="1329.0,709.0 1349.0,700.0 1363.0,707.0 1363.0,751.0" fill="none" stroke="#c8383c" stroke-width="1.4" stroke-opacity="0.8" stroke-linejoin="round" /><polyline points="1363.0,707.0 1363.0,753.0" fill="none" stroke="#c8383c" stroke-width="1.9" stroke-opacity="0.85" stroke-linejoin="round" /><polyline points="1346.0,713.0 1346.0,757.0" fill="none" stroke="#c8383c" stroke-width="1.7" stroke-opacity="0.8" stroke-linejoin="round" /><polyline points="1341.0,715.0 1341.0,759.0" fill="none" stroke="#3a4fd8" stroke-width="1.2" stroke-opacity="0.8" stroke-linejoin="round" /><polyline points="1360.0,711.0 1360.0,753.0" fill="none" stroke="#3a4fd8" stroke-width="0.9" stroke-opacity="0.5" stroke-linejoin="round" /><polygon points="1336.0,753.0 1344.0,756.0 1340.0,760.0 1332.0,757.0" fill="#9a78d8" stroke="none" stroke-width="1" fill-opacity="0.7" stroke-linejoin="round" /><polygon points="1356.0,749.0 1364.0,752.0 1360.0,756.0 1352.0,753.0" fill="#9a78d8" stroke="none" stroke-width="1" fill-opacity="0.7" stroke-linejoin="round" /><polyline points="1275.0,763.0 1330.0,733.0 1345.0,741.0" fill="none" stroke="#c8383c" stroke-width="0.8" stroke-opacity="0.35" stroke-linejoin="round" /><polyline points="1272.0,773.0 1320.0,748.0" fill="none" stroke="#3a4fd8" stroke-width="0.8" stroke-opacity="0.35" stroke-linejoin="round" /><polyline points="1345.0,517.0 1355.0,508.0 1357.0,523.0 1357.0,566.0" fill="none" stroke="#c8383c" stroke-width="1.4" stroke-opacity="0.85" stroke-linejoin="round" /><polyline points="1357.0,523.0 1357.0,568.0" fill="none" stroke="#c8383c" stroke-width="2.2" stroke-opacity="0.9" stroke-linejoin="round" /><polyline points="1346.0,530.0 1346.0,570.0" fill="none" stroke="#3a4fd8" stroke-width="1.2" stroke-opacity="0.85" stroke-linejoin="round" /><polygon points="1338.0,568.0 1346.0,571.0 1350.0,575.0 1342.0,578.0 1336.0,574.0" fill="#3030e0" stroke="none" stroke-width="1" fill-opacity="0.9" stroke-linejoin="round" /><polygon points="1352.0,560.0 1360.0,563.0 1356.0,567.0 1348.0,564.0" fill="#9a78d8" stroke="none" stroke-width="1" fill-opacity="0.7" stroke-linejoin="round" /><polyline points="1262.0,512.0 1300.0,495.0 1320.0,505.0" fill="none" stroke="#3a4fd8" stroke-width="0.9" stroke-opacity="0.6" stroke-linejoin="round" /><polyline points="1280.0,520.0 1320.0,500.0" fill="none" stroke="#c8383c" stroke-width="1.0" stroke-opacity="0.45" stroke-linejoin="round" /><polyline points="1033.0,768.0 1084.0,737.0 1120.0,716.0" fill="none" stroke="#3a4fd8" stroke-width="1.0" stroke-opacity="0.6" stroke-linejoin="round" /><polyline points="1033.0,815.0 1033.0,768.0" fill="none" stroke="#3a4fd8" stroke-width="1.8" stroke-opacity="0.95" stroke-linejoin="round" /><polygon points="1013.0,816.0 1020.0,812.0 1036.0,821.0 1036.0,832.0 1029.0,836.0 1013.0,827.0" fill="#1818d8" stroke="#0a0a80" stroke-width="0.8" fill-opacity="1" stroke-linejoin="round" /><polyline points="1013.0,816.0 1029.0,825.0 1036.0,821.0" fill="none" stroke="#0a0a80" stroke-width="0.8" stroke-opacity="1" stroke-linejoin="round" /><polyline points="1029.0,825.0 1029.0,836.0" fill="none" stroke="#0a0a80" stroke-width="0.8" stroke-opacity="1" stroke-linejoin="round" /><polyline points="1028.0,828.0 1028.0,835.0 995.0,850.0" fill="none" stroke="#3a4fd8" stroke-width="1.8" stroke-opacity="0.95" stroke-linejoin="round" /><polygon points="988.0,848.0 996.0,846.0 993.0,852.0" fill="#1414d0" stroke="none" stroke-width="1" fill-opacity="1" stroke-linejoin="round" /><polyline points="1150.0,800.0 1150.0,900.0" fill="none" stroke="#c8383c" stroke-width="0.7" stroke-opacity="0.25" stroke-linejoin="round" /><polyline points="1170.0,800.0 1170.0,900.0" fill="none" stroke="#c8383c" stroke-width="0.7" stroke-opacity="0.25" stroke-linejoin="round" /><polyline points="1250.0,800.0 1250.0,900.0" fill="none" stroke="#c8383c" stroke-width="0.7" stroke-opacity="0.25" stroke-linejoin="round" /><polyline points="1275.0,800.0 1275.0,899.6" fill="none" stroke="#c8383c" stroke-width="0.7" stroke-opacity="0.25" stroke-linejoin="round" /><polyline points="1290.0,800.0 1290.0,891.5" fill="none" stroke="#c8383c" stroke-width="0.7" stroke-opacity="0.25" stroke-linejoin="round" /><polyline points="1310.0,800.0 1310.0,880.8" fill="none" stroke="#c8383c" stroke-width="0.7" stroke-opacity="0.25" stroke-linejoin="round" /><polyline points="1340.0,800.0 1340.0,864.7" fill="none" stroke="#c8383c" stroke-width="0.7" stroke-opacity="0.25" stroke-linejoin="round" /><polyline points="1180.0,760.0 1180.0,880.0" fill="none" stroke="#c8383c" stroke-width="0.7" stroke-opacity="0.2" stroke-linejoin="round" /><polyline points="1215.0,760.0 1215.0,880.0" fill="none" stroke="#c8383c" stroke-width="0.7" stroke-opacity="0.2" stroke-linejoin="round" /><polyline points="1240.0,760.0 1240.0,880.0" fill="none" stroke="#c8383c" stroke-width="0.7" stroke-opacity="0.2" stroke-linejoin="round" /><path d="M558.4 916.5 L558.4 886" stroke="#1212d8" stroke-width="1.4"/><path d="M554.8 891 L558.4 880.5 L562 891Z" fill="#1212d8"/><path d="M558.4 916.5 L582 903.5" stroke="#22e022" stroke-width="1.4"/><path d="M579 900 L589 898.5 L583 906.5Z" fill="#22e022"/><circle cx="581.5" cy="903.5" r="2" fill="#157a15"/><path d="M558.4 916.5 L582 929.5" stroke="#a01010" stroke-width="1.4"/><path d="M579 927 L589 933 L581 933.5Z" fill="#b01010"/><text x="553.5" y="876" font-family="Liberation Sans" font-weight="700" font-size="11" fill="#1212d8">Z</text><text x="591.5" y="898" font-family="Liberation Sans" font-weight="700" font-size="11" fill="#22e022">Y</text><text x="591" y="941" font-family="Liberation Sans" font-weight="700" font-size="11" fill="#ee1111">X</text></svg>
</body></html>
